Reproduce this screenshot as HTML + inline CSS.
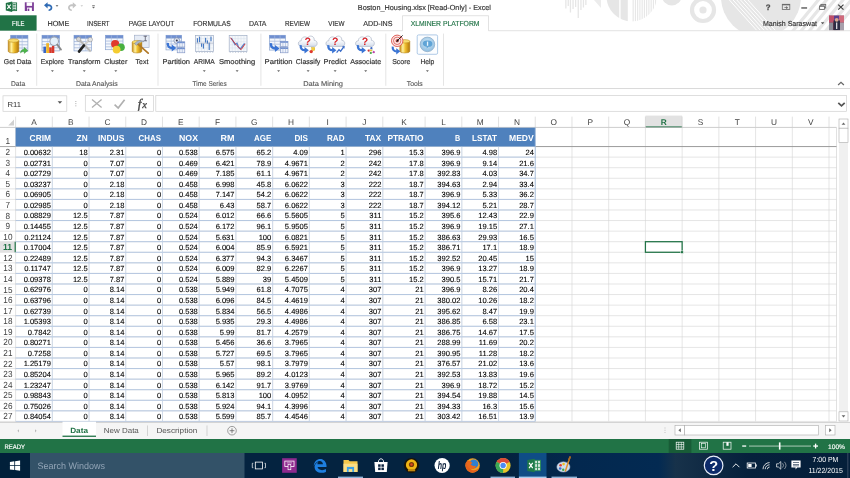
<!DOCTYPE html>
<html lang="en">
<head>
<meta charset="utf-8">
<title>Boston_Housing.xlsx [Read-Only] - Excel</title>
<style>
html,body{margin:0;padding:0;background:#fff;overflow:hidden}
body{width:850px;height:478px}
svg{display:block;font-family:"Liberation Sans", sans-serif;will-change:transform}
text{white-space:pre}
</style>
</head>
<body>
<svg width="850" height="478" viewBox="0 0 850 478" text-rendering="geometricPrecision">
<rect x="0.00" y="0.00" width="850.00" height="478.00" fill="#ffffff" />
<g id="tb-pattern">
<rect x="565.20" y="0.00" width="1.30" height="8.50" fill="#e6e6e6" />
<rect x="567.60" y="0.00" width="1.30" height="6.00" fill="#e6e6e6" />
<rect x="569.80" y="0.00" width="1.30" height="12.50" fill="#e6e6e6" />
<rect x="572.40" y="0.00" width="1.30" height="9.00" fill="#e6e6e6" />
<rect x="575.00" y="0.00" width="1.30" height="7.00" fill="#e6e6e6" />
<rect x="577.60" y="0.00" width="1.30" height="18.00" fill="#e6e6e6" />
<rect x="580.30" y="0.00" width="1.30" height="10.00" fill="#e6e6e6" />
<rect x="582.80" y="0.00" width="1.30" height="7.50" fill="#e6e6e6" />
<rect x="585.20" y="0.00" width="1.30" height="5.00" fill="#e6e6e6" />
<path d="M594 0 L601 0 L601 8 Z" fill="#ececec"/>
<clipPath id="cpA"><circle cx="631.7" cy="-3.7" r="25.2"/></clipPath>
<g clip-path="url(#cpA)">
<rect x="606.00" y="0.00" width="13.20" height="30.00" fill="#e6e6e6" />
<rect x="620.60" y="0.00" width="7.20" height="30.00" fill="#e6e6e6" />
<rect x="632.60" y="0.00" width="1.10" height="30.00" fill="#e6e6e6" />
<rect x="634.85" y="0.00" width="1.10" height="30.00" fill="#e6e6e6" />
<rect x="637.10" y="0.00" width="1.10" height="30.00" fill="#e6e6e6" />
<rect x="639.35" y="0.00" width="1.10" height="30.00" fill="#e6e6e6" />
<rect x="641.60" y="0.00" width="1.10" height="30.00" fill="#e6e6e6" />
<rect x="643.85" y="0.00" width="1.10" height="30.00" fill="#e6e6e6" />
<rect x="646.10" y="0.00" width="1.10" height="30.00" fill="#e6e6e6" />
<rect x="648.35" y="0.00" width="1.10" height="30.00" fill="#e6e6e6" />
<rect x="650.60" y="0.00" width="1.10" height="30.00" fill="#e6e6e6" />
<rect x="652.85" y="0.00" width="1.10" height="30.00" fill="#e6e6e6" />
<rect x="655.10" y="0.00" width="1.10" height="30.00" fill="#e6e6e6" />
<rect x="657.35" y="0.00" width="1.10" height="30.00" fill="#e6e6e6" />
</g>
<circle cx="671.8" cy="-4.5" r="10" fill="#e6e6e6"/>
<circle cx="703" cy="10" r="11" fill="none" stroke="#e6e6e6" stroke-width="4.2"/>
<circle cx="703" cy="10" r="3.6" fill="#e6e6e6"/>
<clipPath id="cpB"><rect x="715" y="0" width="135" height="30.4"/></clipPath>
<clipPath id="cpC"><circle cx="761" cy="-3" r="40"/></clipPath>
<g clip-path="url(#cpB)">
<circle cx="761" cy="-3" r="40" fill="#e6e6e6"/>
<g clip-path="url(#cpC)">
<line x1="724.0" y1="-6" x2="760.0" y2="34" stroke="#fff" stroke-width="1.0"/>
<line x1="727.7" y1="-6" x2="763.7" y2="34" stroke="#fff" stroke-width="1.0"/>
<line x1="731.4" y1="-6" x2="767.4" y2="34" stroke="#fff" stroke-width="1.0"/>
<line x1="735.1" y1="-6" x2="771.1" y2="34" stroke="#fff" stroke-width="1.0"/>
<line x1="738.8" y1="-6" x2="774.8" y2="34" stroke="#fff" stroke-width="1.0"/>
<line x1="742.5" y1="-6" x2="778.5" y2="34" stroke="#fff" stroke-width="1.0"/>
</g>
<line x1="820.0" y1="-2" x2="792.0" y2="32" stroke="#e6e6e6" stroke-width="3.2"/>
<line x1="828.2" y1="-2" x2="800.2" y2="32" stroke="#e6e6e6" stroke-width="3.2"/>
<line x1="836.4" y1="-2" x2="808.4" y2="32" stroke="#e6e6e6" stroke-width="3.2"/>
<line x1="844.6" y1="-2" x2="816.6" y2="32" stroke="#e6e6e6" stroke-width="3.2"/>
<line x1="852.8" y1="-2" x2="824.8" y2="32" stroke="#e6e6e6" stroke-width="3.2"/>
<line x1="861.0" y1="-2" x2="833.0" y2="32" stroke="#e6e6e6" stroke-width="3.2"/>
</g>
</g>
<g id="xl-logo">
<path d="M5.8 2.9 L12.2 1.6 L12.2 11.9 L5.8 10.6 Z" fill="#217346"/>
<rect x="12.20" y="2.90" width="4.40" height="7.70" fill="#ffffff" stroke="#217346" stroke-width="0.9"/>
<rect x="13.10" y="3.95" width="2.60" height="0.90" fill="#217346" />
<rect x="13.10" y="5.65" width="2.60" height="0.90" fill="#217346" />
<rect x="13.10" y="7.35" width="2.60" height="0.90" fill="#217346" />
<rect x="13.10" y="8.95" width="2.60" height="0.90" fill="#217346" />
<path d="M7.3 4.6 L10.7 8.9 M10.7 4.6 L7.3 8.9" stroke="#fff" stroke-width="1.1" fill="none"/>
</g>
<g id="save">
<path d="M24.8 2.3 H33.9 V11 H24.8 Z" fill="#7d3f98"/>
<rect x="26.60" y="2.30" width="5.50" height="3.60" fill="#ffffff" />
<rect x="27.00" y="7.60" width="4.90" height="3.40" fill="#ffffff" />
<rect x="27.60" y="8.60" width="1.70" height="2.40" fill="#7d3f98" />
</g>
<path d="M44 5.3 L47.6 2.2 L47.6 4.2 C51.5 4.2 52.6 6.4 52.3 8.2 C52 9.9 50.4 10.9 48.6 10.9 L48.6 9.4 C49.9 9.3 50.6 8.7 50.6 7.5 C50.6 6.5 49.6 6.3 47.6 6.3 L47.6 8.4 Z" fill="#2e6ab4"/>
<path d="M55.6 5.2 h2.8 l-1.4 1.6 z" fill="#555"/>
<path d="M76.4 5.3 L72.8 2.2 L72.8 4.2 C68.9 4.2 67.8 6.4 68.1 8.2 C68.4 9.9 70 10.9 71.8 10.9 L71.8 9.4 C70.5 9.3 69.8 8.7 69.8 7.5 C69.8 6.5 70.8 6.3 72.8 6.3 L72.8 8.4 Z" fill="#c4c4c4"/>
<path d="M80.5 5.2 h2.6 l-1.3 1.5 z" fill="#c8c8c8"/>
<rect x="92.20" y="5.00" width="2.60" height="0.70" fill="#666" />
<path d="M92 6.8 h3 l-1.5 1.8 z" fill="#666"/>
<text x="357.80" y="10.43" font-size="7.3" fill="#333" textLength="133.20" lengthAdjust="spacingAndGlyphs" stroke="#333" stroke-width="0.15">Boston_Housing.xlsx [Read-Only] - Excel</text>
<text x="768.10" y="9.80" font-size="7.9" fill="#4a4a4a" text-anchor="middle" font-weight="bold" stroke="#4a4a4a" stroke-width="0.25">?</text>
<rect x="782.30" y="4.30" width="7.50" height="5.20" fill="none" stroke="#6a6a6a" stroke-width="0.8"/>
<rect x="782.30" y="4.00" width="7.50" height="1.30" fill="#6a6a6a" />
<path d="M784.4 7.3 h1.8 v-1.2 l1.9 1.6 l-1.9 1.6 v-1.2 h-1.8 z" fill="#6a6a6a"/>
<rect x="801.30" y="7.10" width="5.80" height="1.70" fill="#777" />
<rect x="820.90" y="4.40" width="4.80" height="3.60" fill="none" stroke="#666" stroke-width="0.9"/>
<rect x="819.60" y="6.00" width="4.80" height="3.40" fill="#fff" stroke="#666" stroke-width="0.9"/>
<rect x="819.60" y="5.70" width="4.80" height="0.90" fill="#666" />
<path d="M838.2 4.6 L843.5 9.6 M843.5 4.6 L838.2 9.6" stroke="#444" stroke-width="1.3" fill="none"/>
<text x="763.00" y="25.63" font-size="7.3" fill="#333" textLength="54.00" lengthAdjust="spacingAndGlyphs" stroke="#333" stroke-width="0.15">Manish Saraswat</text>
<path d="M820.8 22.2 h3.6 l-1.8 2 z" fill="#555"/>
<g id="avatar">
<rect x="829.00" y="15.60" width="15.00" height="14.60" fill="#7a3a52" />
<rect x="829.00" y="15.60" width="5.00" height="7.00" fill="#c0506a" />
<rect x="834.00" y="15.60" width="5.00" height="6.00" fill="#5a3f8e" />
<rect x="839.00" y="15.60" width="5.00" height="7.00" fill="#d06a7c" />
<rect x="829.00" y="22.60" width="4.00" height="7.60" fill="#8c8c98" />
<rect x="840.00" y="22.60" width="4.00" height="7.60" fill="#a8a0ac" />
<rect x="833.50" y="20.50" width="6.50" height="9.70" fill="#2c2c44" />
<circle cx="836.7" cy="19.8" r="1.9" fill="#d8a890"/>
<rect x="836.10" y="22.50" width="1.20" height="6.50" fill="#e8e8f0" />
</g>
<rect x="0.00" y="15.30" width="36.60" height="15.40" fill="#217346" />
<text x="12.00" y="25.93" font-size="7.3" fill="#ffffff" textLength="12.50" lengthAdjust="spacingAndGlyphs" stroke="#ffffff" stroke-width="0.15">FILE</text>
<line x1="36.60" y1="30.70" x2="402.50" y2="30.70" stroke="#d6d6d6" stroke-width="0.7" />
<line x1="488.50" y1="30.70" x2="850.00" y2="30.70" stroke="#d6d6d6" stroke-width="0.7" />
<path d="M402.5 30.9 V15.7 H488.5 V30.9" fill="#fff" stroke="#d6d6d6" stroke-width="0.7"/>
<text x="47.50" y="25.93" font-size="7.3" fill="#333" textLength="21.75" lengthAdjust="spacingAndGlyphs" stroke="#333" stroke-width="0.15">HOME</text>
<text x="87.00" y="25.93" font-size="7.3" fill="#333" textLength="22.50" lengthAdjust="spacingAndGlyphs" stroke="#333" stroke-width="0.15">INSERT</text>
<text x="128.75" y="25.93" font-size="7.3" fill="#333" textLength="45.50" lengthAdjust="spacingAndGlyphs" stroke="#333" stroke-width="0.15">PAGE LAYOUT</text>
<text x="193.25" y="25.93" font-size="7.3" fill="#333" textLength="37.50" lengthAdjust="spacingAndGlyphs" stroke="#333" stroke-width="0.15">FORMULAS</text>
<text x="249.00" y="25.93" font-size="7.3" fill="#333" textLength="17.50" lengthAdjust="spacingAndGlyphs" stroke="#333" stroke-width="0.15">DATA</text>
<text x="285.00" y="25.93" font-size="7.3" fill="#333" textLength="25.00" lengthAdjust="spacingAndGlyphs" stroke="#333" stroke-width="0.15">REVIEW</text>
<text x="328.25" y="25.93" font-size="7.3" fill="#333" textLength="16.25" lengthAdjust="spacingAndGlyphs" stroke="#333" stroke-width="0.15">VIEW</text>
<text x="363.25" y="25.93" font-size="7.3" fill="#333" textLength="29.25" lengthAdjust="spacingAndGlyphs" stroke="#333" stroke-width="0.15">ADD-INS</text>
<text x="410.75" y="25.93" font-size="7.3" fill="#217346" textLength="68.75" lengthAdjust="spacingAndGlyphs" stroke="#217346" stroke-width="0.15">XLMINER PLATFORM</text>
<defs>
<linearGradient id="gold" x1="0" x2="1" y1="0" y2="0"><stop offset="0" stop-color="#c98a10"/><stop offset="0.3" stop-color="#fff2a0"/><stop offset="0.55" stop-color="#f0c030"/><stop offset="1" stop-color="#b07408"/></linearGradient>
<linearGradient id="cloud" x1="0" x2="0" y1="0" y2="1"><stop offset="0" stop-color="#ffffff"/><stop offset="0.5" stop-color="#f6f8fc"/><stop offset="1" stop-color="#d4dcea"/></linearGradient>
<radialGradient id="helpg" cx="0.5" cy="0.4" r="0.6"><stop offset="0" stop-color="#d6eaf8"/><stop offset="1" stop-color="#8dbde0"/></radialGradient>
<linearGradient id="tbg" x1="0" x2="1" y1="0" y2="0"><stop offset="0" stop-color="#042340"/><stop offset="0.60" stop-color="#042340"/><stop offset="0.68" stop-color="#03284f"/><stop offset="0.775" stop-color="#032a52"/><stop offset="0.795" stop-color="#17324a"/><stop offset="0.83" stop-color="#102a44"/><stop offset="0.88" stop-color="#06213c"/><stop offset="1" stop-color="#051f3a"/></linearGradient>
</defs>
<rect x="10.70" y="35.30" width="17.20" height="15.90" fill="#f4f7fc" stroke="#8ea6d0" stroke-width="0.7"/>
<rect x="10.70" y="35.30" width="17.20" height="3.18" fill="#6f8fd0" />
<line x1="10.70" y1="38.48" x2="27.90" y2="38.48" stroke="#8ea6d0" stroke-width="0.6" />
<line x1="10.70" y1="41.66" x2="27.90" y2="41.66" stroke="#8ea6d0" stroke-width="0.6" />
<line x1="10.70" y1="44.84" x2="27.90" y2="44.84" stroke="#8ea6d0" stroke-width="0.6" />
<line x1="10.70" y1="48.02" x2="27.90" y2="48.02" stroke="#8ea6d0" stroke-width="0.6" />
<line x1="16.43" y1="35.30" x2="16.43" y2="51.20" stroke="#a9bce0" stroke-width="0.6" />
<line x1="22.17" y1="35.30" x2="22.17" y2="51.20" stroke="#a9bce0" stroke-width="0.6" />
<path d="M8.20 40.50 V51.30 A5.30 1.80 0 0 0 18.80 51.30 V40.50 Z" fill="url(#gold)" stroke="#a87810" stroke-width="0.5"/>
<ellipse cx="13.50" cy="40.50" rx="5.30" ry="1.80" fill="#f8dc70" stroke="#b88818" stroke-width="0.5"/>
<path d="M20.5 53 C20.8 50.4 22.2 49.4 24.2 49.3 L24.2 47.4 L27.8 50.6 L24.2 53.4 L24.2 51.6 C22.8 51.5 21.6 51.9 20.5 53 Z" fill="#4cb848" stroke="#2c8a2c" stroke-width="0.4"/>
<rect x="42.00" y="35.30" width="17.40" height="15.60" fill="#f4f7fc" stroke="#8ea6d0" stroke-width="0.7"/>
<rect x="42.00" y="35.30" width="17.40" height="3.12" fill="#6f8fd0" />
<line x1="42.00" y1="38.42" x2="59.40" y2="38.42" stroke="#8ea6d0" stroke-width="0.6" />
<line x1="42.00" y1="41.54" x2="59.40" y2="41.54" stroke="#8ea6d0" stroke-width="0.6" />
<line x1="42.00" y1="44.66" x2="59.40" y2="44.66" stroke="#8ea6d0" stroke-width="0.6" />
<line x1="42.00" y1="47.78" x2="59.40" y2="47.78" stroke="#8ea6d0" stroke-width="0.6" />
<line x1="47.80" y1="35.30" x2="47.80" y2="50.90" stroke="#a9bce0" stroke-width="0.6" />
<line x1="53.60" y1="35.30" x2="53.60" y2="50.90" stroke="#a9bce0" stroke-width="0.6" />
<rect x="43.40" y="46.60" width="2.60" height="6.40" fill="#3a66c4" />
<rect x="46.20" y="43.20" width="2.80" height="9.80" fill="#f0b428" />
<rect x="49.20" y="47.40" width="2.60" height="5.60" fill="#d8382c" />
<rect x="51.90" y="45.80" width="2.40" height="7.20" fill="#d8382c" />
<circle cx="54.2" cy="41.2" r="4.3" fill="#e4f0fa" stroke="#9aa4b4" stroke-width="1.1"/>
<path d="M57.2 44.6 L61 49.6" stroke="#8a8a8a" stroke-width="1.8" stroke-linecap="round"/>
<rect x="74.00" y="35.30" width="17.60" height="15.60" fill="#f4f7fc" stroke="#8ea6d0" stroke-width="0.7"/>
<rect x="74.00" y="35.30" width="17.60" height="3.12" fill="#6f8fd0" />
<line x1="74.00" y1="38.42" x2="91.60" y2="38.42" stroke="#8ea6d0" stroke-width="0.6" />
<line x1="74.00" y1="41.54" x2="91.60" y2="41.54" stroke="#8ea6d0" stroke-width="0.6" />
<line x1="74.00" y1="44.66" x2="91.60" y2="44.66" stroke="#8ea6d0" stroke-width="0.6" />
<line x1="74.00" y1="47.78" x2="91.60" y2="47.78" stroke="#8ea6d0" stroke-width="0.6" />
<line x1="79.87" y1="35.30" x2="79.87" y2="50.90" stroke="#a9bce0" stroke-width="0.6" />
<line x1="85.73" y1="35.30" x2="85.73" y2="50.90" stroke="#a9bce0" stroke-width="0.6" />
<path d="M79 39.5 L90 50.8" stroke="#c8c8c8" stroke-width="2.6" stroke-linecap="round"/>
<path d="M79 39.5 L90 50.8" stroke="#888" stroke-width="0.5" fill="none"/>
<circle cx="78.6" cy="39.2" r="2.2" fill="#d8d8d8" stroke="#888" stroke-width="0.5"/>
<path d="M89.6 39.6 L84 45.4" stroke="#d0d0d0" stroke-width="2.2" stroke-linecap="round"/>
<circle cx="90.2" cy="39.6" r="2.3" fill="#e4e4e4" stroke="#888" stroke-width="0.5"/>
<path d="M84 45.4 L79 51.6" stroke="#222" stroke-width="2.6" stroke-linecap="round"/>
<rect x="105.60" y="35.30" width="17.40" height="14.40" fill="#f4f7fc" stroke="#8ea6d0" stroke-width="0.7"/>
<rect x="105.60" y="35.30" width="17.40" height="2.88" fill="#6f8fd0" />
<line x1="105.60" y1="38.18" x2="123.00" y2="38.18" stroke="#8ea6d0" stroke-width="0.6" />
<line x1="105.60" y1="41.06" x2="123.00" y2="41.06" stroke="#8ea6d0" stroke-width="0.6" />
<line x1="105.60" y1="43.94" x2="123.00" y2="43.94" stroke="#8ea6d0" stroke-width="0.6" />
<line x1="105.60" y1="46.82" x2="123.00" y2="46.82" stroke="#8ea6d0" stroke-width="0.6" />
<line x1="111.40" y1="35.30" x2="111.40" y2="49.70" stroke="#a9bce0" stroke-width="0.6" />
<line x1="117.20" y1="35.30" x2="117.20" y2="49.70" stroke="#a9bce0" stroke-width="0.6" />
<circle cx="115.2" cy="44" r="4.1" fill="#e0382c"/>
<circle cx="121" cy="47.2" r="3.8" fill="#48b040"/>
<circle cx="116.6" cy="49.6" r="3.9" fill="#f4cc30"/>
<rect x="134.50" y="35.20" width="14.60" height="12.40" fill="#e6ecf6" stroke="#9aa8c4" stroke-width="0.6"/>
<path d="M143.6 36.2 h3.4 M145.3 36.2 v4.6 M143.6 40.8 h3.4" stroke="#445" stroke-width="0.7" fill="none"/>
<path d="M132.20 42.03 V51.37 A4.80 1.63 0 0 0 141.80 51.37 V42.03 Z" fill="url(#gold)" stroke="#a87810" stroke-width="0.5"/>
<ellipse cx="137.00" cy="42.03" rx="4.80" ry="1.63" fill="#f8dc70" stroke="#b88818" stroke-width="0.5"/>
<path d="M137.4 43.6 L148.2 53.2" stroke="#b07828" stroke-width="1.7" stroke-linecap="round"/>
<path d="M134.6 43.8 C137 40.2 141 39.6 144 41.6 C141.4 41.4 138.6 42.4 136.4 45.4 Z" fill="#aeb8c8" stroke="#6a7488" stroke-width="0.4"/>
<rect x="166.00" y="35.30" width="15.60" height="14.60" fill="#f4f7fc" stroke="#8ea6d0" stroke-width="0.7"/>
<rect x="166.00" y="35.30" width="15.60" height="2.92" fill="#6f8fd0" />
<line x1="166.00" y1="38.22" x2="181.60" y2="38.22" stroke="#8ea6d0" stroke-width="0.6" />
<line x1="166.00" y1="41.14" x2="181.60" y2="41.14" stroke="#8ea6d0" stroke-width="0.6" />
<line x1="166.00" y1="44.06" x2="181.60" y2="44.06" stroke="#8ea6d0" stroke-width="0.6" />
<line x1="166.00" y1="46.98" x2="181.60" y2="46.98" stroke="#8ea6d0" stroke-width="0.6" />
<line x1="171.20" y1="35.30" x2="171.20" y2="49.90" stroke="#a9bce0" stroke-width="0.6" />
<line x1="176.40" y1="35.30" x2="176.40" y2="49.90" stroke="#a9bce0" stroke-width="0.6" />
<circle cx="176.8" cy="40.6" r="2.9" fill="#dfe6f4" stroke="#7a88a8" stroke-width="0.7"/>
<circle cx="176.8" cy="40.6" r="1" fill="#334"/>
<path d="M167.77 42.80 C167.39 46.22 169.10 48.12 172.33 48.12" stroke="#3a74d4" stroke-width="2.38" fill="none" stroke-linecap="butt"/>
<path d="M171.76 44.60 L176.32 48.12 L171.76 51.54 Z" fill="#3a74d4"/>
<rect x="177.20" y="41.80" width="7.60" height="5.20" fill="#eef2fa" stroke="#7a8fc0" stroke-width="0.6"/>
<rect x="177.20" y="41.80" width="7.60" height="1.40" fill="#6f8fd0" />
<rect x="177.20" y="47.80" width="7.60" height="5.00" fill="#eef2fa" stroke="#7a8fc0" stroke-width="0.6"/>
<rect x="177.20" y="47.80" width="7.60" height="1.40" fill="#6f8fd0" />
<line x1="179.70" y1="41.80" x2="179.70" y2="52.80" stroke="#8ea6d0" stroke-width="0.5" />
<line x1="182.30" y1="41.80" x2="182.30" y2="52.80" stroke="#8ea6d0" stroke-width="0.5" />
<rect x="195.60" y="35.40" width="17.80" height="16.20" fill="#f4f7fb" stroke="#a0aec6" stroke-width="0.7"/>
<line x1="196.60" y1="51.60" x2="196.60" y2="53.00" stroke="#a8b4c8" stroke-width="0.6" />
<line x1="199.30" y1="51.60" x2="199.30" y2="53.00" stroke="#a8b4c8" stroke-width="0.6" />
<line x1="202.00" y1="51.60" x2="202.00" y2="53.00" stroke="#a8b4c8" stroke-width="0.6" />
<line x1="204.70" y1="51.60" x2="204.70" y2="53.00" stroke="#a8b4c8" stroke-width="0.6" />
<line x1="207.40" y1="51.60" x2="207.40" y2="53.00" stroke="#a8b4c8" stroke-width="0.6" />
<line x1="210.10" y1="51.60" x2="210.10" y2="53.00" stroke="#a8b4c8" stroke-width="0.6" />
<line x1="212.80" y1="51.60" x2="212.80" y2="53.00" stroke="#a8b4c8" stroke-width="0.6" />
<line x1="198.53" y1="35.60" x2="198.53" y2="51.00" stroke="#d0d8e6" stroke-width="0.4" />
<line x1="201.46" y1="35.60" x2="201.46" y2="51.00" stroke="#d0d8e6" stroke-width="0.4" />
<line x1="204.39" y1="35.60" x2="204.39" y2="51.00" stroke="#d0d8e6" stroke-width="0.4" />
<line x1="207.32" y1="35.60" x2="207.32" y2="51.00" stroke="#d0d8e6" stroke-width="0.4" />
<line x1="210.25" y1="35.60" x2="210.25" y2="51.00" stroke="#d0d8e6" stroke-width="0.4" />
<line x1="195.60" y1="38.68" x2="213.20" y2="38.68" stroke="#d0d8e6" stroke-width="0.4" />
<line x1="195.60" y1="41.76" x2="213.20" y2="41.76" stroke="#d0d8e6" stroke-width="0.4" />
<line x1="195.60" y1="44.84" x2="213.20" y2="44.84" stroke="#d0d8e6" stroke-width="0.4" />
<line x1="195.60" y1="47.92" x2="213.20" y2="47.92" stroke="#d0d8e6" stroke-width="0.4" />
<rect x="196.85" y="38.20" width="1.10" height="4.40" fill="#3f74c0" />
<rect x="199.05" y="36.60" width="1.10" height="5.60" fill="#3f74c0" />
<rect x="201.05" y="43.40" width="1.10" height="3.40" fill="#3f74c0" />
<rect x="202.85" y="43.60" width="1.10" height="5.00" fill="#3f74c0" />
<rect x="205.05" y="37.80" width="1.10" height="4.80" fill="#3f74c0" />
<rect x="206.85" y="40.40" width="1.10" height="3.20" fill="#3f74c0" />
<rect x="208.65" y="42.60" width="1.10" height="7.40" fill="#3f74c0" />
<rect x="210.45" y="36.60" width="1.10" height="4.60" fill="#3f74c0" />
<line x1="195.60" y1="43.20" x2="213.20" y2="43.20" stroke="#8896ac" stroke-width="0.5" />
<rect x="229.20" y="35.40" width="17.80" height="16.20" fill="#f4f7fb" stroke="#a0aec6" stroke-width="0.7"/>
<line x1="230.20" y1="51.60" x2="230.20" y2="53.00" stroke="#a8b4c8" stroke-width="0.6" />
<line x1="232.90" y1="51.60" x2="232.90" y2="53.00" stroke="#a8b4c8" stroke-width="0.6" />
<line x1="235.60" y1="51.60" x2="235.60" y2="53.00" stroke="#a8b4c8" stroke-width="0.6" />
<line x1="238.30" y1="51.60" x2="238.30" y2="53.00" stroke="#a8b4c8" stroke-width="0.6" />
<line x1="241.00" y1="51.60" x2="241.00" y2="53.00" stroke="#a8b4c8" stroke-width="0.6" />
<line x1="243.70" y1="51.60" x2="243.70" y2="53.00" stroke="#a8b4c8" stroke-width="0.6" />
<line x1="246.40" y1="51.60" x2="246.40" y2="53.00" stroke="#a8b4c8" stroke-width="0.6" />
<line x1="232.30" y1="35.60" x2="232.30" y2="51.00" stroke="#d0d8e6" stroke-width="0.4" />
<line x1="235.20" y1="35.60" x2="235.20" y2="51.00" stroke="#d0d8e6" stroke-width="0.4" />
<line x1="238.10" y1="35.60" x2="238.10" y2="51.00" stroke="#d0d8e6" stroke-width="0.4" />
<line x1="241.00" y1="35.60" x2="241.00" y2="51.00" stroke="#d0d8e6" stroke-width="0.4" />
<line x1="243.90" y1="35.60" x2="243.90" y2="51.00" stroke="#d0d8e6" stroke-width="0.4" />
<line x1="229.40" y1="38.68" x2="246.80" y2="38.68" stroke="#d0d8e6" stroke-width="0.4" />
<line x1="229.40" y1="41.76" x2="246.80" y2="41.76" stroke="#d0d8e6" stroke-width="0.4" />
<line x1="229.40" y1="44.84" x2="246.80" y2="44.84" stroke="#d0d8e6" stroke-width="0.4" />
<line x1="229.40" y1="47.92" x2="246.80" y2="47.92" stroke="#d0d8e6" stroke-width="0.4" />
<path d="M231.2 38 L233.4 41.6 L235 44.6 L237 43.2 L238.6 47.4 L240.4 49 L242.6 46 L244.6 43.4" stroke="#5a86d0" stroke-width="1.3" fill="none"/>
<path d="M230.4 37.6 L236.6 45.4 L241.2 49.6 L245.2 43.8" stroke="#d8322c" stroke-width="0.9" fill="none"/>
<rect x="269.40" y="35.30" width="16.00" height="14.80" fill="#f4f7fc" stroke="#8ea6d0" stroke-width="0.7"/>
<rect x="269.40" y="35.30" width="16.00" height="2.96" fill="#6f8fd0" />
<line x1="269.40" y1="38.26" x2="285.40" y2="38.26" stroke="#8ea6d0" stroke-width="0.6" />
<line x1="269.40" y1="41.22" x2="285.40" y2="41.22" stroke="#8ea6d0" stroke-width="0.6" />
<line x1="269.40" y1="44.18" x2="285.40" y2="44.18" stroke="#8ea6d0" stroke-width="0.6" />
<line x1="269.40" y1="47.14" x2="285.40" y2="47.14" stroke="#8ea6d0" stroke-width="0.6" />
<line x1="274.73" y1="35.30" x2="274.73" y2="50.10" stroke="#a9bce0" stroke-width="0.6" />
<line x1="280.07" y1="35.30" x2="280.07" y2="50.10" stroke="#a9bce0" stroke-width="0.6" />
<path d="M270.97 43.20 C270.59 46.62 272.30 48.52 275.53 48.52" stroke="#3a74d4" stroke-width="2.38" fill="none" stroke-linecap="butt"/>
<path d="M274.96 45.01 L279.52 48.52 L274.96 51.94 Z" fill="#3a74d4"/>
<rect x="280.40" y="41.40" width="7.60" height="5.20" fill="#eef2fa" stroke="#7a8fc0" stroke-width="0.6"/>
<rect x="280.40" y="41.40" width="7.60" height="1.40" fill="#6f8fd0" />
<rect x="280.40" y="47.60" width="7.60" height="5.20" fill="#eef2fa" stroke="#7a8fc0" stroke-width="0.6"/>
<rect x="280.40" y="47.60" width="7.60" height="1.40" fill="#6f8fd0" />
<line x1="282.90" y1="41.40" x2="282.90" y2="52.80" stroke="#8ea6d0" stroke-width="0.5" />
<line x1="285.50" y1="41.40" x2="285.50" y2="52.80" stroke="#8ea6d0" stroke-width="0.5" />
<path d="M301.40 46.40 C297.40 46.40 297.40 40.60 301.20 40.80 C301.20 37.00 305.40 35.80 307.40 38.00 C309.80 34.40 314.80 36.20 314.20 40.40 C318.20 40.40 318.00 46.40 314.20 46.40 Z" fill="url(#cloud)" stroke="#aab4c6" stroke-width="0.7"/>
<text x="307.70" y="45.00" font-size="10.6" fill="#d8262c" text-anchor="middle" font-weight="bold">?</text>
<path d="M300.74 45.20 C300.38 48.44 302.00 50.24 305.06 50.24" stroke="#3a74d4" stroke-width="2.25" fill="none" stroke-linecap="butt"/>
<path d="M304.52 46.91 L308.84 50.24 L304.52 53.48 Z" fill="#3a74d4"/>
<rect x="311.60" y="47.40" width="3.20" height="3.20" fill="#f4d03c" stroke="#c09a10" stroke-width="0.3"/>
<circle cx="311.2" cy="51.6" r="1.7" fill="#e0382c"/>
<path d="M329.00 46.40 C325.00 46.40 325.00 40.60 328.80 40.80 C328.80 37.00 333.00 35.80 335.00 38.00 C337.40 34.40 342.40 36.20 341.80 40.40 C345.80 40.40 345.60 46.40 341.80 46.40 Z" fill="url(#cloud)" stroke="#aab4c6" stroke-width="0.7"/>
<text x="335.30" y="45.00" font-size="10.6" fill="#d8262c" text-anchor="middle" font-weight="bold">?</text>
<path d="M328.34 45.20 C327.98 48.44 329.60 50.24 332.66 50.24" stroke="#3a74d4" stroke-width="2.25" fill="none" stroke-linecap="butt"/>
<path d="M332.12 46.91 L336.44 50.24 L332.12 53.48 Z" fill="#3a74d4"/>
<path d="M336.6 52.6 L339 49.6 L340.6 51.2 L343.6 47.2" stroke="#3a6cc8" stroke-width="1.3" fill="none"/>
<path d="M342 46.6 L344.8 45.8 L344.4 48.8 Z" fill="#3a6cc8"/>
<path d="M358.60 46.40 C354.60 46.40 354.60 40.60 358.40 40.80 C358.40 37.00 362.60 35.80 364.60 38.00 C367.00 34.40 372.00 36.20 371.40 40.40 C375.40 40.40 375.20 46.40 371.40 46.40 Z" fill="url(#cloud)" stroke="#aab4c6" stroke-width="0.7"/>
<text x="364.90" y="45.00" font-size="10.6" fill="#d8262c" text-anchor="middle" font-weight="bold">?</text>
<path d="M357.94 45.20 C357.58 48.44 359.20 50.24 362.26 50.24" stroke="#3a74d4" stroke-width="2.25" fill="none" stroke-linecap="butt"/>
<path d="M361.72 46.91 L366.04 50.24 L361.72 53.48 Z" fill="#3a74d4"/>
<path d="M368.6 50.6 L371.4 48.2 L373.8 52.2 L370.8 53 Z" stroke="#888" stroke-width="0.4" fill="none"/>
<circle cx="368.6" cy="50.6" r="1.1" fill="#d03030"/><circle cx="371.4" cy="48.2" r="1.1" fill="#3c68c8"/><circle cx="373.8" cy="52.2" r="1.1" fill="#c040a8"/><circle cx="370.8" cy="53" r="1.1" fill="#40a840"/><circle cx="371" cy="50.6" r="1" fill="#e8c020"/>
<path d="M399.80 41.30 V51.30 A5.00 1.70 0 0 0 409.80 51.30 V41.30 Z" fill="url(#gold)" stroke="#a87810" stroke-width="0.5"/>
<ellipse cx="404.80" cy="41.30" rx="5.00" ry="1.70" fill="#f8dc70" stroke="#b88818" stroke-width="0.5"/>
<circle cx="397.2" cy="40.8" r="5.7" fill="#fbeaea" stroke="#dc5048" stroke-width="0.9"/>
<circle cx="397.2" cy="40.8" r="3.7" fill="none" stroke="#dc5048" stroke-width="0.8"/>
<circle cx="397.2" cy="40.8" r="1.7" fill="#e06058"/>
<path d="M397 41 L402.6 35.4" stroke="#111" stroke-width="0.9"/><path d="M396.2 41.9 L399 41 L397.2 39.2 Z" fill="#111"/>
<path d="M392.71 46.60 C392.37 49.66 393.90 51.36 396.79 51.36" stroke="#3a74d4" stroke-width="2.12" fill="none" stroke-linecap="butt"/>
<path d="M396.28 48.22 L400.36 51.36 L396.28 54.42 Z" fill="#3a74d4"/>
<rect x="417.20" y="34.90" width="20.40" height="19.40" fill="#fbfdff" stroke="#8fb4dc" stroke-width="0.7" rx="1.4"/>
<circle cx="427.4" cy="44.4" r="7.3" fill="url(#helpg)" stroke="#8aa8c4" stroke-width="0.7"/>
<path d="M422.8 43.6 C422.8 41.2 425 40.4 427.2 40.6 C430.6 40.2 432.6 41.6 432.4 44 C432.4 46 430.6 47 428.6 46.8 L426.6 48.6 L426.8 46.8 C424.4 46.8 422.8 45.6 422.8 43.6 Z" fill="#5fa4d6"/>
<rect x="426.90" y="41.60" width="1.30" height="4.20" fill="#e8f4fc" />
<text x="3.80" y="64.46" font-size="7.1" fill="#333" textLength="27.60" lengthAdjust="spacingAndGlyphs" stroke="#333" stroke-width="0.18">Get Data</text>
<path d="M16.10 70.2 h3 l-1.5 1.7 z" fill="#666"/>
<text x="40.80" y="64.46" font-size="7.1" fill="#333" textLength="23.20" lengthAdjust="spacingAndGlyphs" stroke="#333" stroke-width="0.18">Explore</text>
<path d="M50.90 70.2 h3 l-1.5 1.7 z" fill="#666"/>
<text x="68.00" y="64.46" font-size="7.1" fill="#333" textLength="32.50" lengthAdjust="spacingAndGlyphs" stroke="#333" stroke-width="0.18">Transform</text>
<path d="M82.75 70.2 h3 l-1.5 1.7 z" fill="#666"/>
<text x="104.20" y="64.46" font-size="7.1" fill="#333" textLength="23.20" lengthAdjust="spacingAndGlyphs" stroke="#333" stroke-width="0.18">Cluster</text>
<path d="M114.30 70.2 h3 l-1.5 1.7 z" fill="#666"/>
<text x="135.60" y="64.46" font-size="7.1" fill="#333" textLength="12.80" lengthAdjust="spacingAndGlyphs" stroke="#333" stroke-width="0.18">Text</text>
<text x="162.50" y="64.46" font-size="7.1" fill="#333" textLength="27.50" lengthAdjust="spacingAndGlyphs" stroke="#333" stroke-width="0.18">Partition</text>
<text x="193.75" y="64.46" font-size="7.1" fill="#333" textLength="21.05" lengthAdjust="spacingAndGlyphs" stroke="#333" stroke-width="0.18">ARIMA</text>
<path d="M202.78 70.2 h3 l-1.5 1.7 z" fill="#666"/>
<text x="219.00" y="64.46" font-size="7.1" fill="#333" textLength="36.20" lengthAdjust="spacingAndGlyphs" stroke="#333" stroke-width="0.18">Smoothing</text>
<path d="M235.60 70.2 h3 l-1.5 1.7 z" fill="#666"/>
<text x="264.60" y="64.46" font-size="7.1" fill="#333" textLength="28.00" lengthAdjust="spacingAndGlyphs" stroke="#333" stroke-width="0.18">Partition</text>
<path d="M277.10 70.2 h3 l-1.5 1.7 z" fill="#666"/>
<text x="295.80" y="64.46" font-size="7.1" fill="#333" textLength="24.60" lengthAdjust="spacingAndGlyphs" stroke="#333" stroke-width="0.18">Classify</text>
<path d="M306.60 70.2 h3 l-1.5 1.7 z" fill="#666"/>
<text x="323.60" y="64.46" font-size="7.1" fill="#333" textLength="23.00" lengthAdjust="spacingAndGlyphs" stroke="#333" stroke-width="0.18">Predict</text>
<path d="M333.60 70.2 h3 l-1.5 1.7 z" fill="#666"/>
<text x="350.20" y="64.46" font-size="7.1" fill="#333" textLength="31.00" lengthAdjust="spacingAndGlyphs" stroke="#333" stroke-width="0.18">Associate</text>
<path d="M364.20 70.2 h3 l-1.5 1.7 z" fill="#666"/>
<text x="392.20" y="64.46" font-size="7.1" fill="#333" textLength="18.20" lengthAdjust="spacingAndGlyphs" stroke="#333" stroke-width="0.18">Score</text>
<text x="420.40" y="64.46" font-size="7.1" fill="#333" textLength="14.00" lengthAdjust="spacingAndGlyphs" stroke="#333" stroke-width="0.18">Help</text>
<path d="M425.90 70.2 h3 l-1.5 1.7 z" fill="#666"/>
<text x="11.00" y="86.16" font-size="7.1" fill="#555" textLength="14.20" lengthAdjust="spacingAndGlyphs" stroke="#555" stroke-width="0.12">Data</text>
<text x="76.00" y="86.16" font-size="7.1" fill="#555" textLength="41.80" lengthAdjust="spacingAndGlyphs" stroke="#555" stroke-width="0.12">Data Analysis</text>
<text x="192.60" y="86.16" font-size="7.1" fill="#555" textLength="34.00" lengthAdjust="spacingAndGlyphs" stroke="#555" stroke-width="0.12">Time Series</text>
<text x="303.20" y="86.16" font-size="7.1" fill="#555" textLength="39.80" lengthAdjust="spacingAndGlyphs" stroke="#555" stroke-width="0.12">Data Mining</text>
<text x="406.80" y="86.16" font-size="7.1" fill="#555" textLength="15.80" lengthAdjust="spacingAndGlyphs" stroke="#555" stroke-width="0.12">Tools</text>
<line x1="36.70" y1="33.60" x2="36.70" y2="85.80" stroke="#dadada" stroke-width="0.7" />
<line x1="158.00" y1="33.60" x2="158.00" y2="85.80" stroke="#dadada" stroke-width="0.7" />
<line x1="260.90" y1="33.60" x2="260.90" y2="85.80" stroke="#dadada" stroke-width="0.7" />
<line x1="385.80" y1="33.60" x2="385.80" y2="85.80" stroke="#dadada" stroke-width="0.7" />
<line x1="443.50" y1="33.60" x2="443.50" y2="85.80" stroke="#dadada" stroke-width="0.7" />
<line x1="0.00" y1="88.50" x2="850.00" y2="88.50" stroke="#d0d0d0" stroke-width="0.8" />
<path d="M838.1 85 L841 82.3 L843.9 85" stroke="#666" stroke-width="1.2" fill="none"/>
<rect x="3.00" y="95.80" width="63.80" height="15.50" fill="#fff" stroke="#d0d0d0" stroke-width="0.7"/>
<text x="7.50" y="106.63" font-size="7.3" fill="#333" textLength="13.50" lengthAdjust="spacingAndGlyphs">R11</text>
<path d="M57.6 101.2 h4.6 l-2.3 2.6 z" fill="#555"/>
<rect x="75.40" y="101.00" width="0.90" height="0.90" fill="#9a9a9a" />
<rect x="75.40" y="103.20" width="0.90" height="0.90" fill="#9a9a9a" />
<rect x="75.40" y="105.40" width="0.90" height="0.90" fill="#9a9a9a" />
<rect x="85.30" y="95.60" width="68.20" height="15.70" fill="#fff" stroke="#d0d0d0" stroke-width="0.7"/>
<path d="M92 99.6 L101.6 107.6 M101.6 99.6 L92 107.6" stroke="#b0b0b0" stroke-width="1.3" fill="none"/>
<path d="M114.6 104.6 L118.2 108 L124.6 99.8" stroke="#b0b0b0" stroke-width="1.7" fill="none"/>
<text x="139.60" y="107.60" font-size="13.2" fill="#444" text-anchor="middle" font-style="italic" font-family='"Liberation Serif", serif' stroke="#444" stroke-width="0.3">f</text>
<text x="144.60" y="107.80" font-size="10.4" fill="#444" text-anchor="middle" font-style="italic" font-family='"Liberation Serif", serif' stroke="#444" stroke-width="0.3">x</text>
<rect x="155.80" y="95.60" width="690.80" height="15.70" fill="#fff" stroke="#d0d0d0" stroke-width="0.7"/>
<path d="M838.3 102.8 L841.5 105.9 L844.7 102.8" stroke="#555" stroke-width="1.7" fill="none"/>
<path d="M8.2 125.6 L14 125.6 L14 119.6 Z" fill="#d0d0d0"/>
<rect x="645.42" y="115.60" width="36.72" height="11.80" fill="#e2e2e2" />
<rect x="645.42" y="126.40" width="36.72" height="1.20" fill="#217346" />
<text x="33.96" y="125.00" font-size="8.3" fill="#444" text-anchor="middle">A</text>
<text x="70.68" y="125.00" font-size="8.3" fill="#444" text-anchor="middle">B</text>
<text x="107.40" y="125.00" font-size="8.3" fill="#444" text-anchor="middle">C</text>
<text x="144.12" y="125.00" font-size="8.3" fill="#444" text-anchor="middle">D</text>
<text x="180.84" y="125.00" font-size="8.3" fill="#444" text-anchor="middle">E</text>
<text x="217.56" y="125.00" font-size="8.3" fill="#444" text-anchor="middle">F</text>
<text x="254.28" y="125.00" font-size="8.3" fill="#444" text-anchor="middle">G</text>
<text x="291.00" y="125.00" font-size="8.3" fill="#444" text-anchor="middle">H</text>
<text x="327.72" y="125.00" font-size="8.3" fill="#444" text-anchor="middle">I</text>
<text x="364.44" y="125.00" font-size="8.3" fill="#444" text-anchor="middle">J</text>
<text x="403.95" y="125.00" font-size="8.3" fill="#444" text-anchor="middle">K</text>
<text x="443.46" y="125.00" font-size="8.3" fill="#444" text-anchor="middle">L</text>
<text x="480.18" y="125.00" font-size="8.3" fill="#444" text-anchor="middle">M</text>
<text x="516.90" y="125.00" font-size="8.3" fill="#444" text-anchor="middle">N</text>
<text x="553.62" y="125.00" font-size="8.3" fill="#444" text-anchor="middle">O</text>
<text x="590.34" y="125.00" font-size="8.3" fill="#444" text-anchor="middle">P</text>
<text x="627.06" y="125.00" font-size="8.3" fill="#444" text-anchor="middle">Q</text>
<text x="663.78" y="125.00" font-size="8.3" fill="#217346" text-anchor="middle" font-weight="bold">R</text>
<text x="700.50" y="125.00" font-size="8.3" fill="#444" text-anchor="middle">S</text>
<text x="737.22" y="125.00" font-size="8.3" fill="#444" text-anchor="middle">T</text>
<text x="773.94" y="125.00" font-size="8.3" fill="#444" text-anchor="middle">U</text>
<text x="810.66" y="125.00" font-size="8.3" fill="#444" text-anchor="middle">V</text>
<line x1="15.60" y1="116.60" x2="15.60" y2="127.40" stroke="#cfcfcf" stroke-width="0.62" />
<line x1="52.32" y1="116.60" x2="52.32" y2="127.40" stroke="#cfcfcf" stroke-width="0.62" />
<line x1="89.04" y1="116.60" x2="89.04" y2="127.40" stroke="#cfcfcf" stroke-width="0.62" />
<line x1="125.76" y1="116.60" x2="125.76" y2="127.40" stroke="#cfcfcf" stroke-width="0.62" />
<line x1="162.48" y1="116.60" x2="162.48" y2="127.40" stroke="#cfcfcf" stroke-width="0.62" />
<line x1="199.20" y1="116.60" x2="199.20" y2="127.40" stroke="#cfcfcf" stroke-width="0.62" />
<line x1="235.92" y1="116.60" x2="235.92" y2="127.40" stroke="#cfcfcf" stroke-width="0.62" />
<line x1="272.64" y1="116.60" x2="272.64" y2="127.40" stroke="#cfcfcf" stroke-width="0.62" />
<line x1="309.36" y1="116.60" x2="309.36" y2="127.40" stroke="#cfcfcf" stroke-width="0.62" />
<line x1="346.08" y1="116.60" x2="346.08" y2="127.40" stroke="#cfcfcf" stroke-width="0.62" />
<line x1="382.80" y1="116.60" x2="382.80" y2="127.40" stroke="#cfcfcf" stroke-width="0.62" />
<line x1="425.10" y1="116.60" x2="425.10" y2="127.40" stroke="#cfcfcf" stroke-width="0.62" />
<line x1="461.82" y1="116.60" x2="461.82" y2="127.40" stroke="#cfcfcf" stroke-width="0.62" />
<line x1="498.54" y1="116.60" x2="498.54" y2="127.40" stroke="#cfcfcf" stroke-width="0.62" />
<line x1="535.26" y1="116.60" x2="535.26" y2="127.40" stroke="#cfcfcf" stroke-width="0.62" />
<line x1="571.98" y1="116.60" x2="571.98" y2="127.40" stroke="#cfcfcf" stroke-width="0.62" />
<line x1="608.70" y1="116.60" x2="608.70" y2="127.40" stroke="#cfcfcf" stroke-width="0.62" />
<line x1="645.42" y1="116.60" x2="645.42" y2="127.40" stroke="#cfcfcf" stroke-width="0.62" />
<line x1="682.14" y1="116.60" x2="682.14" y2="127.40" stroke="#cfcfcf" stroke-width="0.62" />
<line x1="718.86" y1="116.60" x2="718.86" y2="127.40" stroke="#cfcfcf" stroke-width="0.62" />
<line x1="755.58" y1="116.60" x2="755.58" y2="127.40" stroke="#cfcfcf" stroke-width="0.62" />
<line x1="792.30" y1="116.60" x2="792.30" y2="127.40" stroke="#cfcfcf" stroke-width="0.62" />
<line x1="829.02" y1="116.60" x2="829.02" y2="127.40" stroke="#cfcfcf" stroke-width="0.62" />
<line x1="0.00" y1="127.40" x2="836.60" y2="127.40" stroke="#b8b8b8" stroke-width="0.7" />
<line x1="15.60" y1="127.40" x2="15.60" y2="421.42" stroke="#d4d4d4" stroke-width="0.62" />
<line x1="52.32" y1="127.40" x2="52.32" y2="421.42" stroke="#d4d4d4" stroke-width="0.62" />
<line x1="89.04" y1="127.40" x2="89.04" y2="421.42" stroke="#d4d4d4" stroke-width="0.62" />
<line x1="125.76" y1="127.40" x2="125.76" y2="421.42" stroke="#d4d4d4" stroke-width="0.62" />
<line x1="162.48" y1="127.40" x2="162.48" y2="421.42" stroke="#d4d4d4" stroke-width="0.62" />
<line x1="199.20" y1="127.40" x2="199.20" y2="421.42" stroke="#d4d4d4" stroke-width="0.62" />
<line x1="235.92" y1="127.40" x2="235.92" y2="421.42" stroke="#d4d4d4" stroke-width="0.62" />
<line x1="272.64" y1="127.40" x2="272.64" y2="421.42" stroke="#d4d4d4" stroke-width="0.62" />
<line x1="309.36" y1="127.40" x2="309.36" y2="421.42" stroke="#d4d4d4" stroke-width="0.62" />
<line x1="346.08" y1="127.40" x2="346.08" y2="421.42" stroke="#d4d4d4" stroke-width="0.62" />
<line x1="382.80" y1="127.40" x2="382.80" y2="421.42" stroke="#d4d4d4" stroke-width="0.62" />
<line x1="425.10" y1="127.40" x2="425.10" y2="421.42" stroke="#d4d4d4" stroke-width="0.62" />
<line x1="461.82" y1="127.40" x2="461.82" y2="421.42" stroke="#d4d4d4" stroke-width="0.62" />
<line x1="498.54" y1="127.40" x2="498.54" y2="421.42" stroke="#d4d4d4" stroke-width="0.62" />
<line x1="535.26" y1="127.40" x2="535.26" y2="421.42" stroke="#d4d4d4" stroke-width="0.62" />
<line x1="571.98" y1="127.40" x2="571.98" y2="421.42" stroke="#d4d4d4" stroke-width="0.62" />
<line x1="608.70" y1="127.40" x2="608.70" y2="421.42" stroke="#d4d4d4" stroke-width="0.62" />
<line x1="645.42" y1="127.40" x2="645.42" y2="421.42" stroke="#d4d4d4" stroke-width="0.62" />
<line x1="682.14" y1="127.40" x2="682.14" y2="421.42" stroke="#d4d4d4" stroke-width="0.62" />
<line x1="718.86" y1="127.40" x2="718.86" y2="421.42" stroke="#d4d4d4" stroke-width="0.62" />
<line x1="755.58" y1="127.40" x2="755.58" y2="421.42" stroke="#d4d4d4" stroke-width="0.62" />
<line x1="792.30" y1="127.40" x2="792.30" y2="421.42" stroke="#d4d4d4" stroke-width="0.62" />
<line x1="829.02" y1="127.40" x2="829.02" y2="421.42" stroke="#d4d4d4" stroke-width="0.62" />
<line x1="836.60" y1="127.40" x2="836.60" y2="421.42" stroke="#c4c4c4" stroke-width="0.62" />
<line x1="0.00" y1="146.55" x2="836.60" y2="146.55" stroke="#d4d4d4" stroke-width="0.62" />
<line x1="0.00" y1="157.12" x2="836.60" y2="157.12" stroke="#d4d4d4" stroke-width="0.62" />
<line x1="0.00" y1="167.69" x2="836.60" y2="167.69" stroke="#d4d4d4" stroke-width="0.62" />
<line x1="0.00" y1="178.27" x2="836.60" y2="178.27" stroke="#d4d4d4" stroke-width="0.62" />
<line x1="0.00" y1="188.84" x2="836.60" y2="188.84" stroke="#d4d4d4" stroke-width="0.62" />
<line x1="0.00" y1="199.41" x2="836.60" y2="199.41" stroke="#d4d4d4" stroke-width="0.62" />
<line x1="0.00" y1="209.98" x2="836.60" y2="209.98" stroke="#d4d4d4" stroke-width="0.62" />
<line x1="0.00" y1="220.55" x2="836.60" y2="220.55" stroke="#d4d4d4" stroke-width="0.62" />
<line x1="0.00" y1="231.13" x2="836.60" y2="231.13" stroke="#d4d4d4" stroke-width="0.62" />
<line x1="0.00" y1="241.70" x2="836.60" y2="241.70" stroke="#d4d4d4" stroke-width="0.62" />
<line x1="0.00" y1="252.27" x2="836.60" y2="252.27" stroke="#d4d4d4" stroke-width="0.62" />
<line x1="0.00" y1="262.84" x2="836.60" y2="262.84" stroke="#d4d4d4" stroke-width="0.62" />
<line x1="0.00" y1="273.41" x2="836.60" y2="273.41" stroke="#d4d4d4" stroke-width="0.62" />
<line x1="0.00" y1="283.99" x2="836.60" y2="283.99" stroke="#d4d4d4" stroke-width="0.62" />
<line x1="0.00" y1="294.56" x2="836.60" y2="294.56" stroke="#d4d4d4" stroke-width="0.62" />
<line x1="0.00" y1="305.13" x2="836.60" y2="305.13" stroke="#d4d4d4" stroke-width="0.62" />
<line x1="0.00" y1="315.70" x2="836.60" y2="315.70" stroke="#d4d4d4" stroke-width="0.62" />
<line x1="0.00" y1="326.27" x2="836.60" y2="326.27" stroke="#d4d4d4" stroke-width="0.62" />
<line x1="0.00" y1="336.85" x2="836.60" y2="336.85" stroke="#d4d4d4" stroke-width="0.62" />
<line x1="0.00" y1="347.42" x2="836.60" y2="347.42" stroke="#d4d4d4" stroke-width="0.62" />
<line x1="0.00" y1="357.99" x2="836.60" y2="357.99" stroke="#d4d4d4" stroke-width="0.62" />
<line x1="0.00" y1="368.56" x2="836.60" y2="368.56" stroke="#d4d4d4" stroke-width="0.62" />
<line x1="0.00" y1="379.13" x2="836.60" y2="379.13" stroke="#d4d4d4" stroke-width="0.62" />
<line x1="0.00" y1="389.71" x2="836.60" y2="389.71" stroke="#d4d4d4" stroke-width="0.62" />
<line x1="0.00" y1="400.28" x2="836.60" y2="400.28" stroke="#d4d4d4" stroke-width="0.62" />
<line x1="0.00" y1="410.85" x2="836.60" y2="410.85" stroke="#d4d4d4" stroke-width="0.62" />
<line x1="0.00" y1="421.42" x2="836.60" y2="421.42" stroke="#d4d4d4" stroke-width="0.62" />
<rect x="0.00" y="241.70" width="15.60" height="10.57" fill="#e2e2e2" />
<rect x="14.60" y="241.70" width="1.20" height="10.57" fill="#217346" />
<text x="5.50" y="144.30" font-size="8.9" fill="#444" textLength="4.60" lengthAdjust="spacingAndGlyphs">1</text>
<text x="5.62" y="155.12" font-size="8.9" fill="#444" textLength="4.55" lengthAdjust="spacingAndGlyphs">2</text>
<text x="5.62" y="165.69" font-size="8.9" fill="#444" textLength="4.55" lengthAdjust="spacingAndGlyphs">3</text>
<text x="5.62" y="176.27" font-size="8.9" fill="#444" textLength="4.55" lengthAdjust="spacingAndGlyphs">4</text>
<text x="5.62" y="186.84" font-size="8.9" fill="#444" textLength="4.55" lengthAdjust="spacingAndGlyphs">5</text>
<text x="5.62" y="197.41" font-size="8.9" fill="#444" textLength="4.55" lengthAdjust="spacingAndGlyphs">6</text>
<text x="5.62" y="207.98" font-size="8.9" fill="#444" textLength="4.55" lengthAdjust="spacingAndGlyphs">7</text>
<text x="5.62" y="218.55" font-size="8.9" fill="#444" textLength="4.55" lengthAdjust="spacingAndGlyphs">8</text>
<text x="5.62" y="229.13" font-size="8.9" fill="#444" textLength="4.55" lengthAdjust="spacingAndGlyphs">9</text>
<text x="3.35" y="239.70" font-size="8.9" fill="#444" textLength="9.10" lengthAdjust="spacingAndGlyphs">10</text>
<text x="3.05" y="250.27" font-size="8.9" fill="#217346" font-weight="bold" textLength="9.10" lengthAdjust="spacingAndGlyphs">11</text>
<text x="3.35" y="260.84" font-size="8.9" fill="#444" textLength="9.10" lengthAdjust="spacingAndGlyphs">12</text>
<text x="3.35" y="271.41" font-size="8.9" fill="#444" textLength="9.10" lengthAdjust="spacingAndGlyphs">13</text>
<text x="3.35" y="281.99" font-size="8.9" fill="#444" textLength="9.10" lengthAdjust="spacingAndGlyphs">14</text>
<text x="3.35" y="292.56" font-size="8.9" fill="#444" textLength="9.10" lengthAdjust="spacingAndGlyphs">15</text>
<text x="3.35" y="303.13" font-size="8.9" fill="#444" textLength="9.10" lengthAdjust="spacingAndGlyphs">16</text>
<text x="3.35" y="313.70" font-size="8.9" fill="#444" textLength="9.10" lengthAdjust="spacingAndGlyphs">17</text>
<text x="3.35" y="324.27" font-size="8.9" fill="#444" textLength="9.10" lengthAdjust="spacingAndGlyphs">18</text>
<text x="3.35" y="334.85" font-size="8.9" fill="#444" textLength="9.10" lengthAdjust="spacingAndGlyphs">19</text>
<text x="3.35" y="345.42" font-size="8.9" fill="#444" textLength="9.10" lengthAdjust="spacingAndGlyphs">20</text>
<text x="3.35" y="355.99" font-size="8.9" fill="#444" textLength="9.10" lengthAdjust="spacingAndGlyphs">21</text>
<text x="3.35" y="366.56" font-size="8.9" fill="#444" textLength="9.10" lengthAdjust="spacingAndGlyphs">22</text>
<text x="3.35" y="377.13" font-size="8.9" fill="#444" textLength="9.10" lengthAdjust="spacingAndGlyphs">23</text>
<text x="3.35" y="387.71" font-size="8.9" fill="#444" textLength="9.10" lengthAdjust="spacingAndGlyphs">24</text>
<text x="3.35" y="398.28" font-size="8.9" fill="#444" textLength="9.10" lengthAdjust="spacingAndGlyphs">25</text>
<text x="3.35" y="408.85" font-size="8.9" fill="#444" textLength="9.10" lengthAdjust="spacingAndGlyphs">26</text>
<text x="3.35" y="419.42" font-size="8.9" fill="#444" textLength="9.10" lengthAdjust="spacingAndGlyphs">27</text>
<rect x="15.60" y="127.70" width="519.66" height="18.85" fill="#4f81bd" />
<text x="29.60" y="140.70" font-size="8.7" fill="#ffffff" font-weight="bold" textLength="21.40" lengthAdjust="spacingAndGlyphs">CRIM</text>
<text x="76.60" y="140.70" font-size="8.7" fill="#ffffff" font-weight="bold" textLength="11.00" lengthAdjust="spacingAndGlyphs">ZN</text>
<text x="98.00" y="140.70" font-size="8.7" fill="#ffffff" font-weight="bold" textLength="26.40" lengthAdjust="spacingAndGlyphs">INDUS</text>
<text x="138.60" y="140.70" font-size="8.7" fill="#ffffff" font-weight="bold" textLength="22.40" lengthAdjust="spacingAndGlyphs">CHAS</text>
<text x="179.00" y="140.70" font-size="8.7" fill="#ffffff" font-weight="bold" textLength="19.00" lengthAdjust="spacingAndGlyphs">NOX</text>
<text x="220.60" y="140.70" font-size="8.7" fill="#ffffff" font-weight="bold" textLength="14.00" lengthAdjust="spacingAndGlyphs">RM</text>
<text x="254.00" y="140.70" font-size="8.7" fill="#ffffff" font-weight="bold" textLength="17.20" lengthAdjust="spacingAndGlyphs">AGE</text>
<text x="294.40" y="140.70" font-size="8.7" fill="#ffffff" font-weight="bold" textLength="13.60" lengthAdjust="spacingAndGlyphs">DIS</text>
<text x="327.00" y="140.70" font-size="8.7" fill="#ffffff" font-weight="bold" textLength="17.60" lengthAdjust="spacingAndGlyphs">RAD</text>
<text x="365.00" y="140.70" font-size="8.7" fill="#ffffff" font-weight="bold" textLength="16.20" lengthAdjust="spacingAndGlyphs">TAX</text>
<text x="387.40" y="140.70" font-size="8.7" fill="#ffffff" font-weight="bold" textLength="36.20" lengthAdjust="spacingAndGlyphs">PTRATIO</text>
<text x="455.00" y="140.70" font-size="8.7" fill="#ffffff" font-weight="bold" textLength="5.20" lengthAdjust="spacingAndGlyphs">B</text>
<text x="472.00" y="140.70" font-size="8.7" fill="#ffffff" font-weight="bold" textLength="25.00" lengthAdjust="spacingAndGlyphs">LSTAT</text>
<text x="509.00" y="140.70" font-size="8.7" fill="#ffffff" font-weight="bold" textLength="24.80" lengthAdjust="spacingAndGlyphs">MEDV</text>
<line x1="0.00" y1="146.55" x2="15.60" y2="146.55" stroke="#9a9a9a" stroke-width="0.8" />
<line x1="535.26" y1="146.55" x2="836.60" y2="146.55" stroke="#8c8c8c" stroke-width="0.8" />
<line x1="15.60" y1="157.12" x2="535.26" y2="157.12" stroke="#9db8dc" stroke-width="0.7" />
<line x1="15.60" y1="167.69" x2="535.26" y2="167.69" stroke="#9db8dc" stroke-width="0.7" />
<line x1="15.60" y1="178.27" x2="535.26" y2="178.27" stroke="#9db8dc" stroke-width="0.7" />
<line x1="15.60" y1="188.84" x2="535.26" y2="188.84" stroke="#9db8dc" stroke-width="0.7" />
<line x1="15.60" y1="199.41" x2="535.26" y2="199.41" stroke="#9db8dc" stroke-width="0.7" />
<line x1="15.60" y1="209.98" x2="535.26" y2="209.98" stroke="#9db8dc" stroke-width="0.7" />
<line x1="15.60" y1="220.55" x2="535.26" y2="220.55" stroke="#9db8dc" stroke-width="0.7" />
<line x1="15.60" y1="231.13" x2="535.26" y2="231.13" stroke="#9db8dc" stroke-width="0.7" />
<line x1="15.60" y1="241.70" x2="535.26" y2="241.70" stroke="#9db8dc" stroke-width="0.7" />
<line x1="15.60" y1="252.27" x2="535.26" y2="252.27" stroke="#9db8dc" stroke-width="0.7" />
<line x1="15.60" y1="262.84" x2="535.26" y2="262.84" stroke="#9db8dc" stroke-width="0.7" />
<line x1="15.60" y1="273.41" x2="535.26" y2="273.41" stroke="#9db8dc" stroke-width="0.7" />
<line x1="15.60" y1="283.99" x2="535.26" y2="283.99" stroke="#9db8dc" stroke-width="0.7" />
<line x1="15.60" y1="294.56" x2="535.26" y2="294.56" stroke="#9db8dc" stroke-width="0.7" />
<line x1="15.60" y1="305.13" x2="535.26" y2="305.13" stroke="#9db8dc" stroke-width="0.7" />
<line x1="15.60" y1="315.70" x2="535.26" y2="315.70" stroke="#9db8dc" stroke-width="0.7" />
<line x1="15.60" y1="326.27" x2="535.26" y2="326.27" stroke="#9db8dc" stroke-width="0.7" />
<line x1="15.60" y1="336.85" x2="535.26" y2="336.85" stroke="#9db8dc" stroke-width="0.7" />
<line x1="15.60" y1="347.42" x2="535.26" y2="347.42" stroke="#9db8dc" stroke-width="0.7" />
<line x1="15.60" y1="357.99" x2="535.26" y2="357.99" stroke="#9db8dc" stroke-width="0.7" />
<line x1="15.60" y1="368.56" x2="535.26" y2="368.56" stroke="#9db8dc" stroke-width="0.7" />
<line x1="15.60" y1="379.13" x2="535.26" y2="379.13" stroke="#9db8dc" stroke-width="0.7" />
<line x1="15.60" y1="389.71" x2="535.26" y2="389.71" stroke="#9db8dc" stroke-width="0.7" />
<line x1="15.60" y1="400.28" x2="535.26" y2="400.28" stroke="#9db8dc" stroke-width="0.7" />
<line x1="15.60" y1="410.85" x2="535.26" y2="410.85" stroke="#9db8dc" stroke-width="0.7" />
<line x1="15.60" y1="421.42" x2="535.26" y2="421.42" stroke="#9db8dc" stroke-width="0.7" />
<line x1="52.32" y1="146.55" x2="52.32" y2="421.42" stroke="#c3d3ea" stroke-width="0.62" />
<line x1="89.04" y1="146.55" x2="89.04" y2="421.42" stroke="#c3d3ea" stroke-width="0.62" />
<line x1="125.76" y1="146.55" x2="125.76" y2="421.42" stroke="#c3d3ea" stroke-width="0.62" />
<line x1="162.48" y1="146.55" x2="162.48" y2="421.42" stroke="#c3d3ea" stroke-width="0.62" />
<line x1="199.20" y1="146.55" x2="199.20" y2="421.42" stroke="#c3d3ea" stroke-width="0.62" />
<line x1="235.92" y1="146.55" x2="235.92" y2="421.42" stroke="#c3d3ea" stroke-width="0.62" />
<line x1="272.64" y1="146.55" x2="272.64" y2="421.42" stroke="#c3d3ea" stroke-width="0.62" />
<line x1="309.36" y1="146.55" x2="309.36" y2="421.42" stroke="#c3d3ea" stroke-width="0.62" />
<line x1="346.08" y1="146.55" x2="346.08" y2="421.42" stroke="#c3d3ea" stroke-width="0.62" />
<line x1="382.80" y1="146.55" x2="382.80" y2="421.42" stroke="#c3d3ea" stroke-width="0.62" />
<line x1="425.10" y1="146.55" x2="425.10" y2="421.42" stroke="#c3d3ea" stroke-width="0.62" />
<line x1="461.82" y1="146.55" x2="461.82" y2="421.42" stroke="#c3d3ea" stroke-width="0.62" />
<line x1="498.54" y1="146.55" x2="498.54" y2="421.42" stroke="#c3d3ea" stroke-width="0.62" />
<line x1="535.26" y1="127.40" x2="535.26" y2="421.42" stroke="#9db8dc" stroke-width="0.75" />
<g font-size="7.55" fill="#000" stroke="#000" stroke-width="0.1" text-anchor="end">
<text x="50.92" y="155.02">0.00632</text>
<text x="87.64" y="155.02">18</text>
<text x="124.36" y="155.02">2.31</text>
<text x="161.08" y="155.02">0</text>
<text x="197.80" y="155.02">0.538</text>
<text x="234.52" y="155.02">6.575</text>
<text x="271.24" y="155.02">65.2</text>
<text x="307.96" y="155.02">4.09</text>
<text x="344.68" y="155.02">1</text>
<text x="381.40" y="155.02">296</text>
<text x="423.70" y="155.02">15.3</text>
<text x="460.42" y="155.02">396.9</text>
<text x="497.14" y="155.02">4.98</text>
<text x="533.86" y="155.02">24</text>
<text x="50.92" y="165.59">0.02731</text>
<text x="87.64" y="165.59">0</text>
<text x="124.36" y="165.59">7.07</text>
<text x="161.08" y="165.59">0</text>
<text x="197.80" y="165.59">0.469</text>
<text x="234.52" y="165.59">6.421</text>
<text x="271.24" y="165.59">78.9</text>
<text x="307.96" y="165.59">4.9671</text>
<text x="344.68" y="165.59">2</text>
<text x="381.40" y="165.59">242</text>
<text x="423.70" y="165.59">17.8</text>
<text x="460.42" y="165.59">396.9</text>
<text x="497.14" y="165.59">9.14</text>
<text x="533.86" y="165.59">21.6</text>
<text x="50.92" y="176.17">0.02729</text>
<text x="87.64" y="176.17">0</text>
<text x="124.36" y="176.17">7.07</text>
<text x="161.08" y="176.17">0</text>
<text x="197.80" y="176.17">0.469</text>
<text x="234.52" y="176.17">7.185</text>
<text x="271.24" y="176.17">61.1</text>
<text x="307.96" y="176.17">4.9671</text>
<text x="344.68" y="176.17">2</text>
<text x="381.40" y="176.17">242</text>
<text x="423.70" y="176.17">17.8</text>
<text x="460.42" y="176.17">392.83</text>
<text x="497.14" y="176.17">4.03</text>
<text x="533.86" y="176.17">34.7</text>
<text x="50.92" y="186.74">0.03237</text>
<text x="87.64" y="186.74">0</text>
<text x="124.36" y="186.74">2.18</text>
<text x="161.08" y="186.74">0</text>
<text x="197.80" y="186.74">0.458</text>
<text x="234.52" y="186.74">6.998</text>
<text x="271.24" y="186.74">45.8</text>
<text x="307.96" y="186.74">6.0622</text>
<text x="344.68" y="186.74">3</text>
<text x="381.40" y="186.74">222</text>
<text x="423.70" y="186.74">18.7</text>
<text x="460.42" y="186.74">394.63</text>
<text x="497.14" y="186.74">2.94</text>
<text x="533.86" y="186.74">33.4</text>
<text x="50.92" y="197.31">0.06905</text>
<text x="87.64" y="197.31">0</text>
<text x="124.36" y="197.31">2.18</text>
<text x="161.08" y="197.31">0</text>
<text x="197.80" y="197.31">0.458</text>
<text x="234.52" y="197.31">7.147</text>
<text x="271.24" y="197.31">54.2</text>
<text x="307.96" y="197.31">6.0622</text>
<text x="344.68" y="197.31">3</text>
<text x="381.40" y="197.31">222</text>
<text x="423.70" y="197.31">18.7</text>
<text x="460.42" y="197.31">396.9</text>
<text x="497.14" y="197.31">5.33</text>
<text x="533.86" y="197.31">36.2</text>
<text x="50.92" y="207.88">0.02985</text>
<text x="87.64" y="207.88">0</text>
<text x="124.36" y="207.88">2.18</text>
<text x="161.08" y="207.88">0</text>
<text x="197.80" y="207.88">0.458</text>
<text x="234.52" y="207.88">6.43</text>
<text x="271.24" y="207.88">58.7</text>
<text x="307.96" y="207.88">6.0622</text>
<text x="344.68" y="207.88">3</text>
<text x="381.40" y="207.88">222</text>
<text x="423.70" y="207.88">18.7</text>
<text x="460.42" y="207.88">394.12</text>
<text x="497.14" y="207.88">5.21</text>
<text x="533.86" y="207.88">28.7</text>
<text x="50.92" y="218.45">0.08829</text>
<text x="87.64" y="218.45">12.5</text>
<text x="124.36" y="218.45">7.87</text>
<text x="161.08" y="218.45">0</text>
<text x="197.80" y="218.45">0.524</text>
<text x="234.52" y="218.45">6.012</text>
<text x="271.24" y="218.45">66.6</text>
<text x="307.96" y="218.45">5.5605</text>
<text x="344.68" y="218.45">5</text>
<text x="381.40" y="218.45">311</text>
<text x="423.70" y="218.45">15.2</text>
<text x="460.42" y="218.45">395.6</text>
<text x="497.14" y="218.45">12.43</text>
<text x="533.86" y="218.45">22.9</text>
<text x="50.92" y="229.03">0.14455</text>
<text x="87.64" y="229.03">12.5</text>
<text x="124.36" y="229.03">7.87</text>
<text x="161.08" y="229.03">0</text>
<text x="197.80" y="229.03">0.524</text>
<text x="234.52" y="229.03">6.172</text>
<text x="271.24" y="229.03">96.1</text>
<text x="307.96" y="229.03">5.9505</text>
<text x="344.68" y="229.03">5</text>
<text x="381.40" y="229.03">311</text>
<text x="423.70" y="229.03">15.2</text>
<text x="460.42" y="229.03">396.9</text>
<text x="497.14" y="229.03">19.15</text>
<text x="533.86" y="229.03">27.1</text>
<text x="50.92" y="239.60">0.21124</text>
<text x="87.64" y="239.60">12.5</text>
<text x="124.36" y="239.60">7.87</text>
<text x="161.08" y="239.60">0</text>
<text x="197.80" y="239.60">0.524</text>
<text x="234.52" y="239.60">5.631</text>
<text x="271.24" y="239.60">100</text>
<text x="307.96" y="239.60">6.0821</text>
<text x="344.68" y="239.60">5</text>
<text x="381.40" y="239.60">311</text>
<text x="423.70" y="239.60">15.2</text>
<text x="460.42" y="239.60">386.63</text>
<text x="497.14" y="239.60">29.93</text>
<text x="533.86" y="239.60">16.5</text>
<text x="50.92" y="250.17">0.17004</text>
<text x="87.64" y="250.17">12.5</text>
<text x="124.36" y="250.17">7.87</text>
<text x="161.08" y="250.17">0</text>
<text x="197.80" y="250.17">0.524</text>
<text x="234.52" y="250.17">6.004</text>
<text x="271.24" y="250.17">85.9</text>
<text x="307.96" y="250.17">6.5921</text>
<text x="344.68" y="250.17">5</text>
<text x="381.40" y="250.17">311</text>
<text x="423.70" y="250.17">15.2</text>
<text x="460.42" y="250.17">386.71</text>
<text x="497.14" y="250.17">17.1</text>
<text x="533.86" y="250.17">18.9</text>
<text x="50.92" y="260.74">0.22489</text>
<text x="87.64" y="260.74">12.5</text>
<text x="124.36" y="260.74">7.87</text>
<text x="161.08" y="260.74">0</text>
<text x="197.80" y="260.74">0.524</text>
<text x="234.52" y="260.74">6.377</text>
<text x="271.24" y="260.74">94.3</text>
<text x="307.96" y="260.74">6.3467</text>
<text x="344.68" y="260.74">5</text>
<text x="381.40" y="260.74">311</text>
<text x="423.70" y="260.74">15.2</text>
<text x="460.42" y="260.74">392.52</text>
<text x="497.14" y="260.74">20.45</text>
<text x="533.86" y="260.74">15</text>
<text x="50.92" y="271.31">0.11747</text>
<text x="87.64" y="271.31">12.5</text>
<text x="124.36" y="271.31">7.87</text>
<text x="161.08" y="271.31">0</text>
<text x="197.80" y="271.31">0.524</text>
<text x="234.52" y="271.31">6.009</text>
<text x="271.24" y="271.31">82.9</text>
<text x="307.96" y="271.31">6.2267</text>
<text x="344.68" y="271.31">5</text>
<text x="381.40" y="271.31">311</text>
<text x="423.70" y="271.31">15.2</text>
<text x="460.42" y="271.31">396.9</text>
<text x="497.14" y="271.31">13.27</text>
<text x="533.86" y="271.31">18.9</text>
<text x="50.92" y="281.89">0.09378</text>
<text x="87.64" y="281.89">12.5</text>
<text x="124.36" y="281.89">7.87</text>
<text x="161.08" y="281.89">0</text>
<text x="197.80" y="281.89">0.524</text>
<text x="234.52" y="281.89">5.889</text>
<text x="271.24" y="281.89">39</text>
<text x="307.96" y="281.89">5.4509</text>
<text x="344.68" y="281.89">5</text>
<text x="381.40" y="281.89">311</text>
<text x="423.70" y="281.89">15.2</text>
<text x="460.42" y="281.89">390.5</text>
<text x="497.14" y="281.89">15.71</text>
<text x="533.86" y="281.89">21.7</text>
<text x="50.92" y="292.46">0.62976</text>
<text x="87.64" y="292.46">0</text>
<text x="124.36" y="292.46">8.14</text>
<text x="161.08" y="292.46">0</text>
<text x="197.80" y="292.46">0.538</text>
<text x="234.52" y="292.46">5.949</text>
<text x="271.24" y="292.46">61.8</text>
<text x="307.96" y="292.46">4.7075</text>
<text x="344.68" y="292.46">4</text>
<text x="381.40" y="292.46">307</text>
<text x="423.70" y="292.46">21</text>
<text x="460.42" y="292.46">396.9</text>
<text x="497.14" y="292.46">8.26</text>
<text x="533.86" y="292.46">20.4</text>
<text x="50.92" y="303.03">0.63796</text>
<text x="87.64" y="303.03">0</text>
<text x="124.36" y="303.03">8.14</text>
<text x="161.08" y="303.03">0</text>
<text x="197.80" y="303.03">0.538</text>
<text x="234.52" y="303.03">6.096</text>
<text x="271.24" y="303.03">84.5</text>
<text x="307.96" y="303.03">4.4619</text>
<text x="344.68" y="303.03">4</text>
<text x="381.40" y="303.03">307</text>
<text x="423.70" y="303.03">21</text>
<text x="460.42" y="303.03">380.02</text>
<text x="497.14" y="303.03">10.26</text>
<text x="533.86" y="303.03">18.2</text>
<text x="50.92" y="313.60">0.62739</text>
<text x="87.64" y="313.60">0</text>
<text x="124.36" y="313.60">8.14</text>
<text x="161.08" y="313.60">0</text>
<text x="197.80" y="313.60">0.538</text>
<text x="234.52" y="313.60">5.834</text>
<text x="271.24" y="313.60">56.5</text>
<text x="307.96" y="313.60">4.4986</text>
<text x="344.68" y="313.60">4</text>
<text x="381.40" y="313.60">307</text>
<text x="423.70" y="313.60">21</text>
<text x="460.42" y="313.60">395.62</text>
<text x="497.14" y="313.60">8.47</text>
<text x="533.86" y="313.60">19.9</text>
<text x="50.92" y="324.17">1.05393</text>
<text x="87.64" y="324.17">0</text>
<text x="124.36" y="324.17">8.14</text>
<text x="161.08" y="324.17">0</text>
<text x="197.80" y="324.17">0.538</text>
<text x="234.52" y="324.17">5.935</text>
<text x="271.24" y="324.17">29.3</text>
<text x="307.96" y="324.17">4.4986</text>
<text x="344.68" y="324.17">4</text>
<text x="381.40" y="324.17">307</text>
<text x="423.70" y="324.17">21</text>
<text x="460.42" y="324.17">386.85</text>
<text x="497.14" y="324.17">6.58</text>
<text x="533.86" y="324.17">23.1</text>
<text x="50.92" y="334.75">0.7842</text>
<text x="87.64" y="334.75">0</text>
<text x="124.36" y="334.75">8.14</text>
<text x="161.08" y="334.75">0</text>
<text x="197.80" y="334.75">0.538</text>
<text x="234.52" y="334.75">5.99</text>
<text x="271.24" y="334.75">81.7</text>
<text x="307.96" y="334.75">4.2579</text>
<text x="344.68" y="334.75">4</text>
<text x="381.40" y="334.75">307</text>
<text x="423.70" y="334.75">21</text>
<text x="460.42" y="334.75">386.75</text>
<text x="497.14" y="334.75">14.67</text>
<text x="533.86" y="334.75">17.5</text>
<text x="50.92" y="345.32">0.80271</text>
<text x="87.64" y="345.32">0</text>
<text x="124.36" y="345.32">8.14</text>
<text x="161.08" y="345.32">0</text>
<text x="197.80" y="345.32">0.538</text>
<text x="234.52" y="345.32">5.456</text>
<text x="271.24" y="345.32">36.6</text>
<text x="307.96" y="345.32">3.7965</text>
<text x="344.68" y="345.32">4</text>
<text x="381.40" y="345.32">307</text>
<text x="423.70" y="345.32">21</text>
<text x="460.42" y="345.32">288.99</text>
<text x="497.14" y="345.32">11.69</text>
<text x="533.86" y="345.32">20.2</text>
<text x="50.92" y="355.89">0.7258</text>
<text x="87.64" y="355.89">0</text>
<text x="124.36" y="355.89">8.14</text>
<text x="161.08" y="355.89">0</text>
<text x="197.80" y="355.89">0.538</text>
<text x="234.52" y="355.89">5.727</text>
<text x="271.24" y="355.89">69.5</text>
<text x="307.96" y="355.89">3.7965</text>
<text x="344.68" y="355.89">4</text>
<text x="381.40" y="355.89">307</text>
<text x="423.70" y="355.89">21</text>
<text x="460.42" y="355.89">390.95</text>
<text x="497.14" y="355.89">11.28</text>
<text x="533.86" y="355.89">18.2</text>
<text x="50.92" y="366.46">1.25179</text>
<text x="87.64" y="366.46">0</text>
<text x="124.36" y="366.46">8.14</text>
<text x="161.08" y="366.46">0</text>
<text x="197.80" y="366.46">0.538</text>
<text x="234.52" y="366.46">5.57</text>
<text x="271.24" y="366.46">98.1</text>
<text x="307.96" y="366.46">3.7979</text>
<text x="344.68" y="366.46">4</text>
<text x="381.40" y="366.46">307</text>
<text x="423.70" y="366.46">21</text>
<text x="460.42" y="366.46">376.57</text>
<text x="497.14" y="366.46">21.02</text>
<text x="533.86" y="366.46">13.6</text>
<text x="50.92" y="377.03">0.85204</text>
<text x="87.64" y="377.03">0</text>
<text x="124.36" y="377.03">8.14</text>
<text x="161.08" y="377.03">0</text>
<text x="197.80" y="377.03">0.538</text>
<text x="234.52" y="377.03">5.965</text>
<text x="271.24" y="377.03">89.2</text>
<text x="307.96" y="377.03">4.0123</text>
<text x="344.68" y="377.03">4</text>
<text x="381.40" y="377.03">307</text>
<text x="423.70" y="377.03">21</text>
<text x="460.42" y="377.03">392.53</text>
<text x="497.14" y="377.03">13.83</text>
<text x="533.86" y="377.03">19.6</text>
<text x="50.92" y="387.61">1.23247</text>
<text x="87.64" y="387.61">0</text>
<text x="124.36" y="387.61">8.14</text>
<text x="161.08" y="387.61">0</text>
<text x="197.80" y="387.61">0.538</text>
<text x="234.52" y="387.61">6.142</text>
<text x="271.24" y="387.61">91.7</text>
<text x="307.96" y="387.61">3.9769</text>
<text x="344.68" y="387.61">4</text>
<text x="381.40" y="387.61">307</text>
<text x="423.70" y="387.61">21</text>
<text x="460.42" y="387.61">396.9</text>
<text x="497.14" y="387.61">18.72</text>
<text x="533.86" y="387.61">15.2</text>
<text x="50.92" y="398.18">0.98843</text>
<text x="87.64" y="398.18">0</text>
<text x="124.36" y="398.18">8.14</text>
<text x="161.08" y="398.18">0</text>
<text x="197.80" y="398.18">0.538</text>
<text x="234.52" y="398.18">5.813</text>
<text x="271.24" y="398.18">100</text>
<text x="307.96" y="398.18">4.0952</text>
<text x="344.68" y="398.18">4</text>
<text x="381.40" y="398.18">307</text>
<text x="423.70" y="398.18">21</text>
<text x="460.42" y="398.18">394.54</text>
<text x="497.14" y="398.18">19.88</text>
<text x="533.86" y="398.18">14.5</text>
<text x="50.92" y="408.75">0.75026</text>
<text x="87.64" y="408.75">0</text>
<text x="124.36" y="408.75">8.14</text>
<text x="161.08" y="408.75">0</text>
<text x="197.80" y="408.75">0.538</text>
<text x="234.52" y="408.75">5.924</text>
<text x="271.24" y="408.75">94.1</text>
<text x="307.96" y="408.75">4.3996</text>
<text x="344.68" y="408.75">4</text>
<text x="381.40" y="408.75">307</text>
<text x="423.70" y="408.75">21</text>
<text x="460.42" y="408.75">394.33</text>
<text x="497.14" y="408.75">16.3</text>
<text x="533.86" y="408.75">15.6</text>
<text x="50.92" y="419.32">0.84054</text>
<text x="87.64" y="419.32">0</text>
<text x="124.36" y="419.32">8.14</text>
<text x="161.08" y="419.32">0</text>
<text x="197.80" y="419.32">0.538</text>
<text x="234.52" y="419.32">5.599</text>
<text x="271.24" y="419.32">85.7</text>
<text x="307.96" y="419.32">4.4546</text>
<text x="344.68" y="419.32">4</text>
<text x="381.40" y="419.32">307</text>
<text x="423.70" y="419.32">21</text>
<text x="460.42" y="419.32">303.42</text>
<text x="497.14" y="419.32">16.51</text>
<text x="533.86" y="419.32">13.9</text>
</g>
<rect x="645.42" y="241.70" width="36.72" height="10.57" fill="none" stroke="#217346" stroke-width="1.25"/>
<rect x="680.74" y="250.87" width="2.60" height="2.60" fill="#217346" stroke="#fff" stroke-width="0.5"/>
<rect x="836.90" y="112.00" width="13.40" height="309.42" fill="#ffffff" />
<rect x="839.00" y="128.20" width="9.00" height="283.72" fill="#f0f0f0" />
<rect x="839.00" y="119.00" width="9.00" height="9.20" fill="#fff" stroke="#ababab" stroke-width="0.6"/>
<path d="M841.6 124.8 h3.8 l-1.9 -2.4 z" fill="#666"/>
<rect x="839.00" y="128.20" width="9.00" height="14.20" fill="#fff" stroke="#ababab" stroke-width="0.6"/>
<rect x="839.00" y="411.82" width="9.00" height="9.20" fill="#fff" stroke="#ababab" stroke-width="0.6"/>
<path d="M841.6 415.22 h3.8 l-1.9 2.4 z" fill="#666"/>
<rect x="0.00" y="421.82" width="850.00" height="17.58" fill="#f5f5f5" />
<line x1="0.00" y1="422.42" x2="850.00" y2="422.42" stroke="#c8c8c8" stroke-width="0.8" />
<path d="M19 429.2 L17.4 430.8 L19 432.4 Z" fill="#b8b8b8"/>
<path d="M35 429.2 L36.6 430.8 L35 432.4 Z" fill="#b8b8b8"/>
<rect x="62.50" y="421.72" width="33.50" height="15.40" fill="#ffffff" />
<rect x="62.50" y="435.60" width="33.50" height="1.30" fill="#217346" />
<text x="70.20" y="433.14" font-size="7.6" fill="#217346" font-weight="bold" textLength="17.80" lengthAdjust="spacingAndGlyphs">Data</text>
<text x="103.80" y="433.06" font-size="7.4" fill="#555" textLength="35.00" lengthAdjust="spacingAndGlyphs">New Data</text>
<line x1="147.50" y1="425.50" x2="147.50" y2="436.00" stroke="#c4c4c4" stroke-width="0.7" />
<text x="156.40" y="433.06" font-size="7.4" fill="#555" textLength="41.00" lengthAdjust="spacingAndGlyphs">Description</text>
<line x1="207.00" y1="425.50" x2="207.00" y2="436.00" stroke="#c4c4c4" stroke-width="0.7" />
<circle cx="232" cy="430.7" r="4.3" fill="none" stroke="#777" stroke-width="0.7"/>
<path d="M229.6 430.7 h4.8 M232 428.3 v4.8" stroke="#666" stroke-width="0.8"/>
<rect x="664.60" y="427.60" width="0.80" height="0.80" fill="#a8a8a8" />
<rect x="664.60" y="429.80" width="0.80" height="0.80" fill="#a8a8a8" />
<rect x="664.60" y="432.00" width="0.80" height="0.80" fill="#a8a8a8" />
<rect x="675.00" y="425.40" width="9.60" height="9.60" fill="#fff" stroke="#ababab" stroke-width="0.6"/>
<path d="M680.8 428.2 v4 l-2.4 -2 z" fill="#666"/>
<rect x="684.60" y="425.40" width="134.00" height="9.60" fill="#fff" stroke="#ababab" stroke-width="0.6"/>
<rect x="825.40" y="425.40" width="9.60" height="9.60" fill="#fff" stroke="#ababab" stroke-width="0.6"/>
<path d="M829.2 428.2 v4 l2.4 -2 z" fill="#666"/>
<rect x="0.00" y="439.00" width="850.00" height="14.30" fill="#217346" />
<text x="4.50" y="448.78" font-size="6.6" fill="#ffffff" textLength="20.50" lengthAdjust="spacingAndGlyphs" stroke="#ffffff" stroke-width="0.15">READY</text>
<rect x="668.70" y="439.00" width="22.70" height="14.00" fill="#185c37" />
<rect x="676.20" y="442.20" width="7.60" height="7.00" fill="none" stroke="#fff" stroke-width="0.7"/>
<line x1="676.20" y1="444.50" x2="683.80" y2="444.50" stroke="#fff" stroke-width="0.6" />
<line x1="676.20" y1="446.90" x2="683.80" y2="446.90" stroke="#fff" stroke-width="0.6" />
<line x1="678.70" y1="442.20" x2="678.70" y2="449.20" stroke="#fff" stroke-width="0.6" />
<line x1="681.30" y1="442.20" x2="681.30" y2="449.20" stroke="#fff" stroke-width="0.6" />
<rect x="699.60" y="442.20" width="7.80" height="7.00" fill="none" stroke="#fff" stroke-width="0.7"/>
<rect x="701.60" y="443.60" width="3.80" height="4.20" fill="none" stroke="#fff" stroke-width="0.6"/>
<rect x="723.20" y="442.20" width="7.80" height="7.00" fill="none" stroke="#fff" stroke-width="0.7"/>
<rect x="726.40" y="442.20" width="2.20" height="3.60" fill="#fff" />
<rect x="742.20" y="445.40" width="4.00" height="1.30" fill="#fff" />
<rect x="749.00" y="445.70" width="62.00" height="0.70" fill="#e6efe9" />
<rect x="778.90" y="442.40" width="1.60" height="7.20" fill="#fff" />
<rect x="813.20" y="445.40" width="4.80" height="1.30" fill="#fff" />
<rect x="814.95" y="443.65" width="1.30" height="4.80" fill="#fff" />
<text x="828.00" y="448.78" font-size="6.6" fill="#fff" textLength="17.00" lengthAdjust="spacingAndGlyphs" stroke="#fff" stroke-width="0.15">100%</text>
<rect x="0.00" y="453.00" width="850.00" height="25.00" fill="url(#tbg)" />
<rect x="0.00" y="453.00" width="30.00" height="25.00" fill="#01203a" />
<rect x="30.00" y="453.00" width="214.50" height="25.00" fill="#335268" />
<path d="M9.9 461.9 L14.3 461.3 V465.2 H9.9 Z M15.1 461.2 L20.1 460.5 V465.2 H15.1 Z M9.9 466 H14.3 V470 L9.9 469.4 Z M15.1 466 H20.1 V470.8 L15.1 470.1 Z" fill="#fff"/>
<text x="37.60" y="469.15" font-size="9.3" fill="#93a5b7" textLength="67.40" lengthAdjust="spacingAndGlyphs">Search Windows</text>
<rect x="255.30" y="462.10" width="7.20" height="6.80" fill="none" stroke="#fff" stroke-width="0.8"/>
<path d="M253.3 463.3 h-1 v4.4 h1 M264.5 463.3 h1 v4.4 h-1" stroke="#fff" stroke-width="0.7" fill="none"/>
<rect x="282.13" y="458.20" width="14.60" height="14.60" fill="#8e2a8e" />
<rect x="284.83" y="461.10" width="9.20" height="5.40" fill="none" stroke="#fff" stroke-width="0.8"/>
<rect x="288.03" y="464.30" width="2.80" height="5.40" fill="#8e2a8e" stroke="#fff" stroke-width="0.7"/>
<path d="M286.8 462.9 h5.2" stroke="#fff" stroke-width="0.6"/>
<path d="M313.76 465.90 C314.36 456.50 326.96 456.50 326.56 467.10 L317.56 467.10 C317.96 470.50 322.96 470.90 325.96 469.10 L325.96 471.90 C320.96 474.10 314.36 472.50 314.56 466.50 C314.96 463.90 316.96 462.30 318.36 461.90 C317.36 462.90 317.36 463.90 317.46 464.30 L322.96 464.30 C322.96 460.10 316.96 459.10 313.76 465.90 Z" fill="#1e7fe0"/>
<path d="M343.5 459.9 h5 l1.2 1.4 h7.8 v10.6 h-14 z" fill="#f5c84c"/>
<rect x="343.49" y="463.70" width="14.00" height="8.20" fill="#fbdf86" />
<rect x="346.89" y="466.90" width="7.20" height="5.00" fill="#3aa0e8" />
<rect x="348.69" y="469.10" width="3.60" height="2.80" fill="#fbdf86" />
<path d="M374.4 462.1 h13.2 l-0.8 9.8 h-11.6 z" fill="#fff"/>
<path d="M378.4 462.1 c0 -4.4 5.2 -4.4 5.2 0" stroke="#fff" stroke-width="0.9" fill="none"/>
<rect x="378.12" y="464.30" width="2.50" height="2.50" fill="#0c2340" />
<rect x="381.42" y="464.30" width="2.50" height="2.50" fill="#0c2340" />
<rect x="378.12" y="467.60" width="2.50" height="2.50" fill="#0c2340" />
<rect x="381.42" y="467.60" width="2.50" height="2.50" fill="#0c2340" />
<circle cx="411.5" cy="465.5" r="7.6" fill="#1a1408"/>
<circle cx="411.5" cy="464.9" r="5.6" fill="#f0b414"/>
<circle cx="411.5" cy="464.5" r="2.6" fill="#7a3a08"/>
<circle cx="411.5" cy="464.5" r="1.2" fill="#e04820"/>
<rect x="407.95" y="469.10" width="7.20" height="2.20" fill="#c08810" />
<circle cx="442.1" cy="465.5" r="7.6" fill="#fff"/>
<text x="437.68" y="468.50" font-size="11" fill="#0a1e3a" font-weight="bold" textLength="8.60" lengthAdjust="spacingAndGlyphs" font-style="italic">hp</text>
<circle cx="472.6" cy="465.5" r="7.2" fill="#f0a020"/>
<path d="M468.01 459.90 A7.2 7.2 0 1 0 479.51 467.50 C476.61 471.10 471.61 471.10 469.81 467.90 Z" fill="#e4601c"/>
<circle cx="473.8" cy="463.9" r="4.5" fill="#2f7fd0"/>
<path d="M467.21 460.90 C469.61 460.10 471.21 461.90 472.41 462.90 L470.61 464.30 C472.01 466.10 474.21 466.50 476.01 465.70 C475.41 468.90 471.61 470.10 469.01 468.10 C467.01 466.10 466.61 463.10 467.21 460.90 Z" fill="#e8681c"/>
<circle cx="503.1" cy="465.5" r="7.5" fill="#e8c428"/>
<path d="M503.14 465.50 L496.64 461.75 A7.5 7.5 0 0 1 509.64 461.75 Z" fill="#dc4a38"/>
<path d="M503.14 465.50 L496.64 461.75 A7.5 7.5 0 0 0 503.14 473.00 Z" fill="#3aa858"/>
<circle cx="503.1" cy="465.5" r="3.6" fill="#fff"/>
<circle cx="503.1" cy="465.5" r="2.7" fill="#4a8af4"/>
<rect x="518.90" y="453.00" width="27.60" height="25.00" fill="#0f4d86" />
<path d="M527.3 460.1 L534.7 458.7 V472.3 L527.3 470.9 Z" fill="#1f7a48"/>
<rect x="534.67" y="460.30" width="5.80" height="10.40" fill="#cfe6d6" stroke="#2a8a54" stroke-width="0.9"/>
<rect x="537.07" y="460.30" width="0.90" height="10.40" fill="#2a8a54" />
<rect x="534.67" y="463.30" width="5.80" height="0.80" fill="#2a8a54" />
<rect x="534.67" y="466.90" width="5.80" height="0.80" fill="#2a8a54" />
<path d="M529.1 462.9 L532.7 468.1 M532.7 462.9 L529.1 468.1" stroke="#fff" stroke-width="1.2"/>
<ellipse cx="563.4" cy="466.9" rx="6.6" ry="5.2" fill="#cfdcec" stroke="#8fa4c0" stroke-width="0.5"/>
<circle cx="560.6" cy="465.3" r="1.3" fill="#e04030"/><circle cx="563.6" cy="464.1" r="1.3" fill="#f0c020"/><circle cx="560.2" cy="468.5" r="1.3" fill="#3a70d0"/><circle cx="563.2" cy="469.7" r="1.2" fill="#40a848"/>
<path d="M569.8 457.5 L565.4 470.9" stroke="#e09030" stroke-width="1.5" stroke-linecap="round"/>
<path d="M570.0 456.9 L568.8 460.5" stroke="#a86820" stroke-width="1.7" stroke-linecap="round"/>
<rect x="338.00" y="476.60" width="25.00" height="1.40" fill="#8eb4d8" />
<rect x="490.50" y="476.60" width="24.50" height="1.40" fill="#8eb4d8" />
<rect x="518.90" y="476.60" width="27.60" height="1.40" fill="#a8cef0" />
<rect x="551.50" y="476.60" width="25.50" height="1.40" fill="#8eb4d8" />
<circle cx="713.6" cy="465.4" r="9.3" fill="#0c2a6a" stroke="#e8eef8" stroke-width="1.2"/>
<text x="713.60" y="470.60" font-size="14.5" fill="#ffffff" text-anchor="middle" font-weight="bold">?</text>
<path d="M732.6 467.2 L736 463.8 L739.4 467.2" stroke="#fff" stroke-width="0.9" fill="none"/>
<rect x="747.20" y="463.00" width="8.20" height="5.00" fill="none" stroke="#fff" stroke-width="0.8"/>
<rect x="748.20" y="464.00" width="3.40" height="3.00" fill="#fff" />
<rect x="755.80" y="464.40" width="0.90" height="2.20" fill="#fff" />
<path d="M762.2 469 L769.4 469 L769.4 461.6 Z" fill="none"/>
<path d="M767.4 469.2 A2.2 2.2 0 0 1 769.6 467.0" stroke="#e8e8e8" stroke-width="0.9" fill="none"/>
<path d="M765.2 469.2 A4.4 4.4 0 0 1 769.6 464.8" stroke="#e8e8e8" stroke-width="0.9" fill="none"/>
<path d="M763.0 469.2 A6.6 6.6 0 0 1 769.6 462.6" stroke="#e8e8e8" stroke-width="0.9" fill="none"/>
<path d="M776.6 463.8 h1.8 l2.4 -2.2 v7.6 l-2.4 -2.2 h-1.8 z" fill="none" stroke="#fff" stroke-width="0.7"/>
<path d="M782.6 463.2 a3.4 3.4 0 0 1 0 4.4 M784.4 461.8 a5.4 5.4 0 0 1 0 7.2" stroke="#d8d8d8" stroke-width="0.6" fill="none"/>
<path d="M791.4 460.6 h9.2 v7 h-3.4 l-1.6 1.8 v-1.8 h-4.2 z" fill="#fff"/>
<rect x="793.00" y="462.40" width="6.00" height="0.60" fill="#0c2340" />
<rect x="793.00" y="464.00" width="6.00" height="0.60" fill="#0c2340" />
<rect x="793.00" y="465.60" width="6.00" height="0.60" fill="#0c2340" />
<text x="812.60" y="462.26" font-size="7.4" fill="#fff" textLength="25.80" lengthAdjust="spacingAndGlyphs">7:00 PM</text>
<text x="808.40" y="472.86" font-size="7.4" fill="#fff" textLength="34.40" lengthAdjust="spacingAndGlyphs">11/22/2015</text>
<rect x="847.60" y="453.00" width="0.60" height="25.00" fill="#5a6a80" />
</svg>
</body>
</html>
